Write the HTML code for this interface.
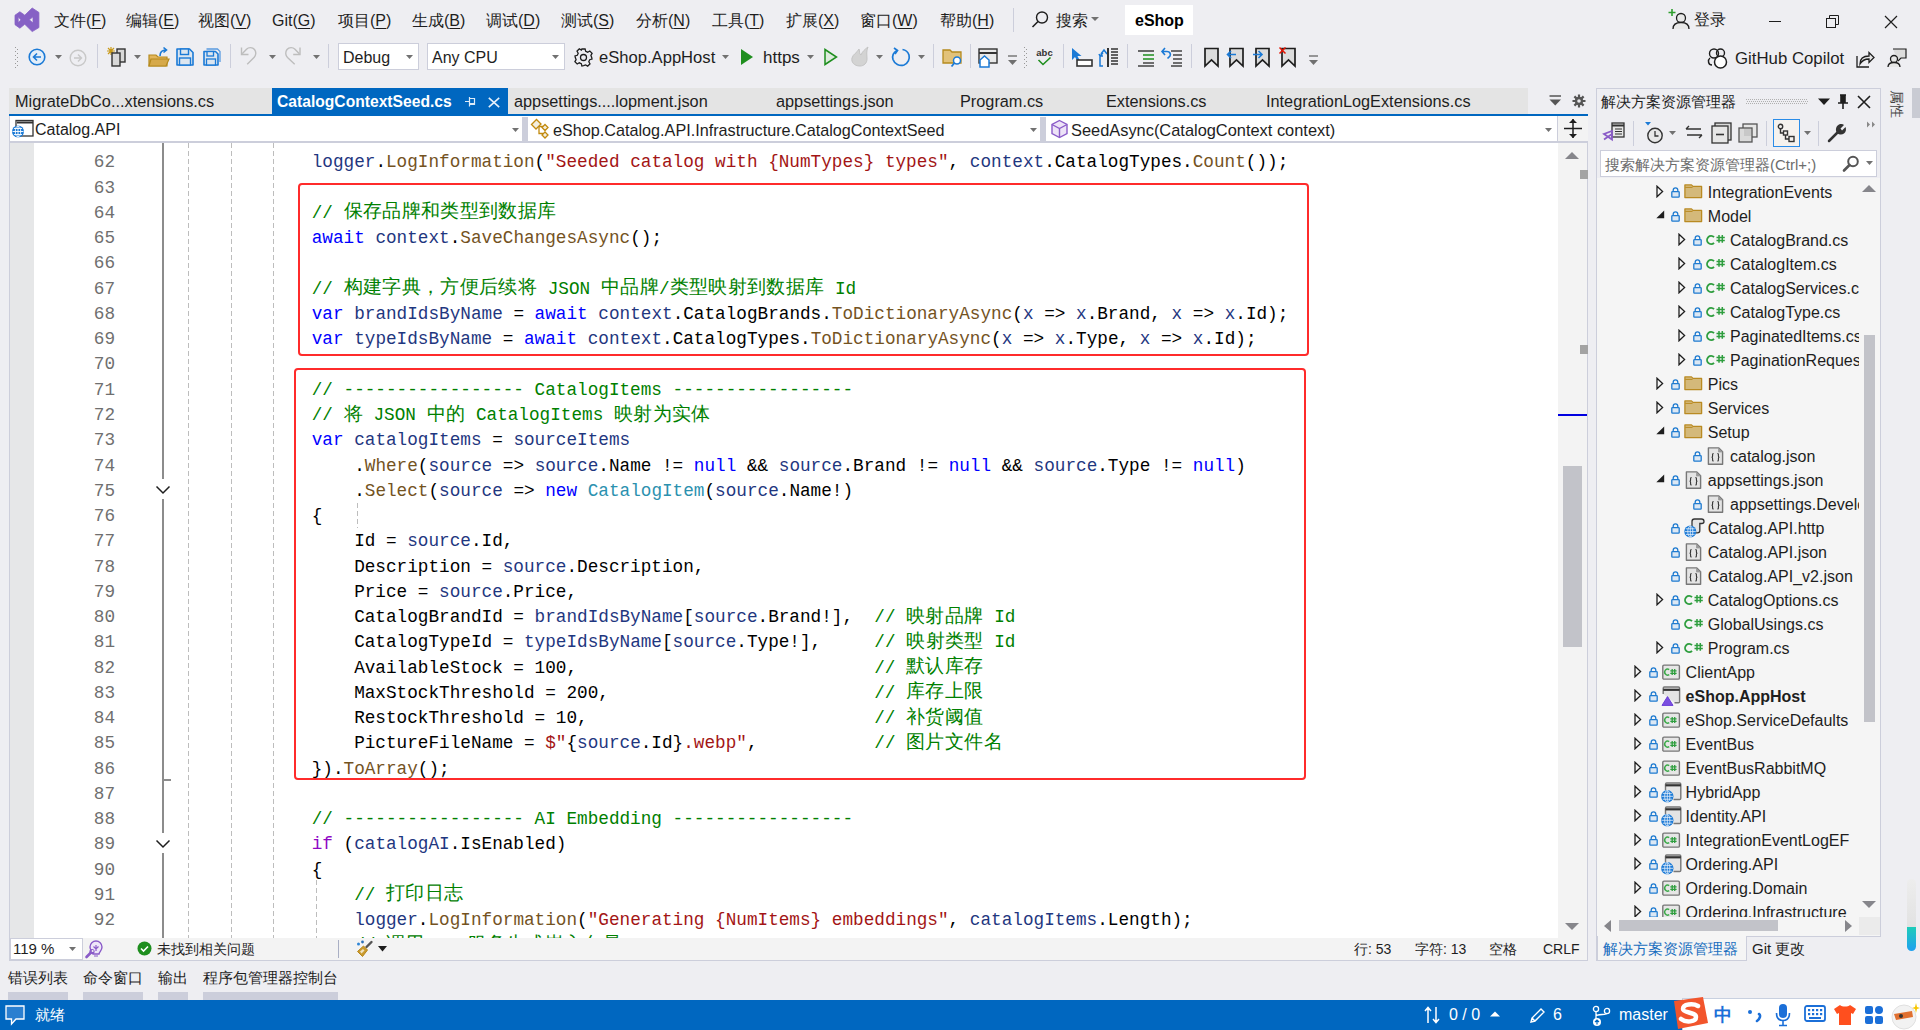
<!DOCTYPE html><html><head><meta charset="utf-8"><style>
*{margin:0;padding:0;box-sizing:border-box}
html,body{width:1920px;height:1030px;overflow:hidden;background:#EEEEF2;font-family:"Liberation Sans",sans-serif;position:relative}
.t{position:absolute;white-space:nowrap;line-height:24px;height:24px}
.code{position:absolute;white-space:pre;font-family:"Liberation Mono",monospace;font-size:17.7px;line-height:25px;height:25px}
.cj{font-weight:normal;font-family:"Liberation Sans",sans-serif;font-size:19px;display:inline-block;width:19.36px;text-align:left;position:relative;top:-0.5px;line-height:0}
.ln{position:absolute;font-family:"Liberation Mono",monospace;font-size:17.7px;color:#6F6F6F;text-align:right;width:80px;line-height:25px}
u{text-decoration:underline;text-underline-offset:2px}
</style></head><body>
<svg style="position:absolute;left:10px;top:4px;" width="36" height="32" viewBox="0 0 36 32" overflow="visible"><path fill-rule="evenodd" d="M5 11.2 L9.9 7.8 L14.75 11.2 L22.2 4 L28.9 8.4 V23.6 L22.2 27.6 L14.75 20.2 L9.9 24.2 L5 20.7 Z M8.2 13 V18.6 L11 15.8 Z M23 12.8 L19.3 15.8 L23 19 Z" fill="#8661C5" stroke="#8661C5" stroke-width="0.8" stroke-linejoin="round"/></svg>
<div class="t " style="left:54px;top:9px;font-size:16px;color:#1E1E1E;">文件(<u>F</u>)</div>
<div class="t " style="left:126px;top:9px;font-size:16px;color:#1E1E1E;">编辑(<u>E</u>)</div>
<div class="t " style="left:198px;top:9px;font-size:16px;color:#1E1E1E;">视图(<u>V</u>)</div>
<div class="t " style="left:272px;top:9px;font-size:16px;color:#1E1E1E;">Git(<u>G</u>)</div>
<div class="t " style="left:338px;top:9px;font-size:16px;color:#1E1E1E;">项目(<u>P</u>)</div>
<div class="t " style="left:412px;top:9px;font-size:16px;color:#1E1E1E;">生成(<u>B</u>)</div>
<div class="t " style="left:486px;top:9px;font-size:16px;color:#1E1E1E;">调试(<u>D</u>)</div>
<div class="t " style="left:561px;top:9px;font-size:16px;color:#1E1E1E;">测试(<u>S</u>)</div>
<div class="t " style="left:636px;top:9px;font-size:16px;color:#1E1E1E;">分析(<u>N</u>)</div>
<div class="t " style="left:712px;top:9px;font-size:16px;color:#1E1E1E;">工具(<u>T</u>)</div>
<div class="t " style="left:786px;top:9px;font-size:16px;color:#1E1E1E;">扩展(<u>X</u>)</div>
<div class="t " style="left:860px;top:9px;font-size:16px;color:#1E1E1E;">窗口(<u>W</u>)</div>
<div class="t " style="left:940px;top:9px;font-size:16px;color:#1E1E1E;">帮助(<u>H</u>)</div>
<div style="position:absolute;left:1013px;top:8px;width:1px;height:24px;background:#CCCEDB;"></div>
<svg style="position:absolute;left:1030px;top:10px;" width="20" height="20" viewBox="0 0 20 20" overflow="visible"><circle cx="12" cy="7.5" r="5.5" fill="none" stroke="#1E1E1E" stroke-width="1.4"/><path d="M8 11.5 L2.5 17" stroke="#1E1E1E" stroke-width="1.6"/></svg>
<div class="t " style="left:1056px;top:9px;font-size:16px;color:#1E1E1E;">搜索</div>
<svg style="position:absolute;left:1091px;top:17px;" width="9" height="6" viewBox="0 0 9 6" overflow="visible"><path d="M0 0 H8 L4 4Z" fill="#717171"/></svg>
<div style="position:absolute;left:1125px;top:5px;width:68px;height:30px;background:#FFFFFF;"></div>
<div class="t " style="left:1135px;top:9px;font-size:16px;color:#000;font-weight:bold">eShop</div>
<svg style="position:absolute;left:1668px;top:8px;" width="22" height="22" viewBox="0 0 22 22" overflow="visible"><path d="M4 1 V8 M0.5 4.5 H7.5" stroke="#2E9E2E" stroke-width="1.6"/><circle cx="13" cy="10" r="4.5" fill="#E8E8E8" stroke="#1E1E1E" stroke-width="1.3"/><path d="M5 21 C5 16 9 14.5 13 14.5 C17 14.5 21 16 21 21" fill="#E8E8E8" stroke="#1E1E1E" stroke-width="1.3"/></svg>
<div class="t " style="left:1694px;top:8px;font-size:16px;color:#1E1E1E;">登录</div>
<div style="position:absolute;left:1769px;top:21px;width:12px;height:1px;background:#1E1E1E;"></div>
<svg style="position:absolute;left:1826px;top:15px;" width="14" height="14" viewBox="0 0 14 14" overflow="visible"><rect x="0.5" y="3.5" width="9" height="9" fill="none" stroke="#1E1E1E"/><path d="M3.5 3.5 V0.5 H12.5 V9.5 H9.5" fill="none" stroke="#1E1E1E"/></svg>
<svg style="position:absolute;left:1884px;top:15px;" width="14" height="14" viewBox="0 0 14 14" overflow="visible"><path d="M1 1 L13 13 M13 1 L1 13" stroke="#1E1E1E" stroke-width="1.2"/></svg>
<svg style="position:absolute;left:15px;top:47px;" width="4" height="22" viewBox="0 0 4 22" overflow="visible"><rect x="0" y="0" width="1" height="1" fill="#999"/><rect x="2" y="2" width="1" height="1" fill="#999"/><rect x="0" y="4" width="1" height="1" fill="#999"/><rect x="2" y="6" width="1" height="1" fill="#999"/><rect x="0" y="8" width="1" height="1" fill="#999"/><rect x="2" y="10" width="1" height="1" fill="#999"/><rect x="0" y="12" width="1" height="1" fill="#999"/><rect x="2" y="14" width="1" height="1" fill="#999"/><rect x="0" y="16" width="1" height="1" fill="#999"/><rect x="2" y="18" width="1" height="1" fill="#999"/><rect x="0" y="20" width="1" height="1" fill="#999"/></svg>
<svg style="position:absolute;left:28px;top:48px;" width="18" height="18" viewBox="0 0 18 18" overflow="visible"><circle cx="9" cy="9" r="7.8" fill="#E3EEF9" stroke="#1B7AD6" stroke-width="1.6"/><path d="M13 9 H5.5 M9 5.5 L5.5 9 L9 12.5" fill="none" stroke="#1B7AD6" stroke-width="1.6"/></svg>
<svg style="position:absolute;left:55px;top:55px;" width="8" height="5" viewBox="0 0 8 5" overflow="visible"><path d="M0 0 H7 L3.5 4Z" fill="#717171"/></svg>
<svg style="position:absolute;left:69px;top:49px;" width="18" height="18" viewBox="0 0 18 18" overflow="visible"><circle cx="9" cy="9" r="7.8" fill="none" stroke="#C8C8C8" stroke-width="1.4"/><path d="M5 9 H12.5 M9 5.5 L12.5 9 L9 12.5" fill="none" stroke="#C8C8C8" stroke-width="1.4"/></svg>
<div style="position:absolute;left:97px;top:44px;width:1px;height:24px;background:#CCCEDB;"></div>
<svg style="position:absolute;left:106px;top:46px;" width="22" height="22" viewBox="0 0 22 22" overflow="visible"><g stroke="#C99A1A" stroke-width="1.2"><path d="M5 1 V9 M1 5 H9 M2 2 L8 8 M8 2 L2 8"/></g><rect x="11" y="3" width="8" height="13" fill="#D8D8D8" stroke="#333" stroke-width="1.4"/><rect x="6" y="7" width="8" height="13" fill="#D8D8D8" stroke="#333" stroke-width="1.4"/></svg>
<svg style="position:absolute;left:134px;top:55px;" width="8" height="5" viewBox="0 0 8 5" overflow="visible"><path d="M0 0 H7 L3.5 4Z" fill="#717171"/></svg>
<svg style="position:absolute;left:148px;top:46px;" width="22" height="22" viewBox="0 0 22 22" overflow="visible"><path d="M1 9 H8 L10 11 H19 V20 H1 Z" fill="#E2B55A" stroke="#B58A1E" stroke-width="1.2"/><path d="M3 13 H21 L18 20 H1 Z" fill="#D6A94A" stroke="#B58A1E" stroke-width="1.2"/><path d="M12 10 C12 6 14 4 18 4 M15.5 1.5 L18.5 4 L15.5 6.5" fill="none" stroke="#1B7AD6" stroke-width="1.6"/></svg>
<svg style="position:absolute;left:176px;top:48px;" width="18" height="18" viewBox="0 0 18 18" overflow="visible"><path d="M1 1 H13.5 L17 4.5 V17 H1 Z" fill="#DCE6F0" stroke="#1B7AD6" stroke-width="1.6" stroke-linejoin="round"/><rect x="4.5" y="1" width="8" height="5.5" fill="#DCE6F0" stroke="#1B7AD6" stroke-width="1.4"/><rect x="3.5" y="10" width="11" height="7" fill="#DCE6F0" stroke="#1B7AD6" stroke-width="1.4"/></svg>
<svg style="position:absolute;left:203px;top:48px;" width="18" height="18" viewBox="0 0 18 18" overflow="visible"><path d="M3.5 1 H14.5 L17 3.5 V14" fill="none" stroke="#5A9BE0" stroke-width="1.3"/><path d="M1 3.5 H12.5 L15 6 V17 H1 Z" fill="#DCE6F0" stroke="#1B7AD6" stroke-width="1.6" stroke-linejoin="round"/><rect x="4" y="3.5" width="6.5" height="4.5" fill="#DCE6F0" stroke="#1B7AD6" stroke-width="1.3"/><rect x="3.5" y="11" width="9" height="6" fill="#DCE6F0" stroke="#1B7AD6" stroke-width="1.3"/></svg>
<div style="position:absolute;left:230px;top:44px;width:1px;height:24px;background:#CCCEDB;"></div>
<svg style="position:absolute;left:240px;top:47px;" width="18" height="20" viewBox="0 0 18 20" overflow="visible"><path d="M1.5 0.5 V7.5 H8.5" fill="none" stroke="#BDBDBD" stroke-width="1.4"/><path d="M2.2 6.8 L6.5 2.2 C8.5 0.2 12.5 0 14.5 2.5 C16.5 5 16 8.5 14 10.5 L7.2 17.2" fill="none" stroke="#BDBDBD" stroke-width="1.4"/></svg>
<svg style="position:absolute;left:269px;top:55px;" width="8" height="5" viewBox="0 0 8 5" overflow="visible"><path d="M0 0 H7 L3.5 4Z" fill="#717171"/></svg>
<svg style="position:absolute;left:285px;top:47px;" width="18" height="20" viewBox="0 0 18 20" overflow="visible"><path d="M15 0.5 V7.5 H8.2" fill="none" stroke="#BDBDBD" stroke-width="1.4"/><path d="M14.3 6.8 L10 2.2 C8 0.2 4 0 2 2.5 C0 5 0.5 8.5 2.5 10.5 L9.7 17.2" fill="none" stroke="#BDBDBD" stroke-width="1.4"/></svg>
<svg style="position:absolute;left:313px;top:55px;" width="8" height="5" viewBox="0 0 8 5" overflow="visible"><path d="M0 0 H7 L3.5 4Z" fill="#717171"/></svg>
<div style="position:absolute;left:328px;top:44px;width:1px;height:24px;background:#CCCEDB;"></div>
<div style="position:absolute;left:338px;top:43px;width:81px;height:27px;background:#FFFFFF;border:1px solid #CCCEDB"></div>
<div class="t " style="left:343px;top:46px;font-size:16px;color:#1E1E1E;">Debug</div>
<svg style="position:absolute;left:406px;top:55px;" width="8" height="5" viewBox="0 0 8 5" overflow="visible"><path d="M0 0 H7 L3.5 4Z" fill="#717171"/></svg>
<div style="position:absolute;left:427px;top:43px;width:138px;height:27px;background:#FFFFFF;border:1px solid #CCCEDB"></div>
<div class="t " style="left:432px;top:46px;font-size:16px;color:#1E1E1E;">Any CPU</div>
<svg style="position:absolute;left:552px;top:55px;" width="8" height="5" viewBox="0 0 8 5" overflow="visible"><path d="M0 0 H7 L3.5 4Z" fill="#717171"/></svg>
<svg style="position:absolute;left:574px;top:48px;" width="19" height="19" viewBox="0 0 19 19" overflow="visible"><g transform="translate(9.5 9.5)"><path d="M-1.6 -8.5 H1.6 L2.2 -6.2 L4.2 -5.3 L6.3 -6.5 L8.6 -4.2 L7.4 -2.1 L8.2 -0.1 L8.5 1.6 V1.6 L6.2 2.2 L5.3 4.2 L6.5 6.3 L4.2 8.6 L2.1 7.4 L0.1 8.2 L-1.6 8.5 L-2.2 6.2 L-4.2 5.3 L-6.3 6.5 L-8.6 4.2 L-7.4 2.1 L-8.2 0.1 L-8.5 -1.6 L-6.2 -2.2 L-5.3 -4.2 L-6.5 -6.3 L-4.2 -8.6 L-2.1 -7.4 Z" fill="none" stroke="#1E1E1E" stroke-width="1.3"/><circle r="3" fill="none" stroke="#1E1E1E" stroke-width="1.3"/></g></svg>
<div class="t " style="left:599px;top:46px;font-size:16.6px;color:#1E1E1E;">eShop.AppHost</div>
<svg style="position:absolute;left:722px;top:55px;" width="8" height="5" viewBox="0 0 8 5" overflow="visible"><path d="M0 0 H7 L3.5 4Z" fill="#717171"/></svg>
<svg style="position:absolute;left:740px;top:48px;" width="14" height="18" viewBox="0 0 14 18" overflow="visible"><path d="M1 1 L13 9 L1 17 Z" fill="#1E8E1E"/></svg>
<div class="t " style="left:763px;top:46px;font-size:17px;color:#1E1E1E;">https</div>
<svg style="position:absolute;left:807px;top:55px;" width="8" height="5" viewBox="0 0 8 5" overflow="visible"><path d="M0 0 H7 L3.5 4Z" fill="#717171"/></svg>
<svg style="position:absolute;left:824px;top:48px;" width="14" height="18" viewBox="0 0 14 18" overflow="visible"><path d="M1 1.5 L12.5 9 L1 16.5 Z" fill="#DDEBDD" stroke="#1E8E1E" stroke-width="1.5"/></svg>
<svg style="position:absolute;left:850px;top:46px;" width="19" height="21" viewBox="0 0 19 21" overflow="visible"><path d="M10 20 C4 20 1 16 2 12 C3 8 7 7 9 3 C10 6 9 8 11 9 C12 6 15 3 18 1 C16 5 17 9 17 13 C17 17 14 20 10 20Z" fill="#D3D3D3" stroke="#C4C4C4"/></svg>
<svg style="position:absolute;left:876px;top:55px;" width="8" height="5" viewBox="0 0 8 5" overflow="visible"><path d="M0 0 H7 L3.5 4Z" fill="#717171"/></svg>
<svg style="position:absolute;left:891px;top:47px;" width="20" height="20" viewBox="0 0 20 20" overflow="visible"><path d="M6 3.5 C2.5 5.5 1 9 2 12.5 C3.5 17 8.5 19.5 13 18 C17 16.5 19 12 18 8 C17 5 14.5 3 11.5 2.5" fill="none" stroke="#1B7AD6" stroke-width="1.7"/><path d="M3 1 L6.5 3.5 L4 7" fill="none" stroke="#1B7AD6" stroke-width="1.7"/></svg>
<svg style="position:absolute;left:918px;top:55px;" width="8" height="5" viewBox="0 0 8 5" overflow="visible"><path d="M0 0 H7 L3.5 4Z" fill="#717171"/></svg>
<div style="position:absolute;left:933px;top:44px;width:1px;height:24px;background:#CCCEDB;"></div>
<svg style="position:absolute;left:942px;top:47px;" width="22" height="21" viewBox="0 0 22 21" overflow="visible"><path d="M1 3 H8 L10 5 H19 V16 H1 Z" fill="#E2C27A" stroke="#B58A1E" stroke-width="1.3"/><circle cx="15" cy="13.5" r="3.5" fill="#fff" stroke="#1B7AD6" stroke-width="1.5"/><path d="M12.5 16 L9.5 19.5" stroke="#1B7AD6" stroke-width="1.8"/></svg>
<div style="position:absolute;left:970px;top:44px;width:1px;height:24px;background:#CCCEDB;"></div>
<svg style="position:absolute;left:978px;top:48px;" width="21" height="20" viewBox="0 0 21 20" overflow="visible"><rect x="1" y="1" width="18" height="14" fill="#E8E8E8" stroke="#333" stroke-width="1.4"/><path d="M1 5 H19" stroke="#333" stroke-width="2"/><path d="M2 12 L6.5 8 L11 12 V19 H2 Z" fill="#fff" stroke="#1B7AD6" stroke-width="1.5"/></svg>
<svg style="position:absolute;left:1008px;top:55px;" width="10" height="12" viewBox="0 0 10 12" overflow="visible"><path d="M0 1 H9" stroke="#707070" stroke-width="1.4"/><path d="M0 5 H9 L4.5 10Z" fill="#707070"/></svg>
<svg style="position:absolute;left:1024px;top:47px;" width="3" height="22" viewBox="0 0 3 22" overflow="visible"><rect x="0" y="0" width="1" height="1" fill="#999"/><rect x="2" y="2" width="1" height="1" fill="#999"/><rect x="0" y="4" width="1" height="1" fill="#999"/><rect x="2" y="6" width="1" height="1" fill="#999"/><rect x="0" y="8" width="1" height="1" fill="#999"/><rect x="2" y="10" width="1" height="1" fill="#999"/><rect x="0" y="12" width="1" height="1" fill="#999"/><rect x="2" y="14" width="1" height="1" fill="#999"/><rect x="0" y="16" width="1" height="1" fill="#999"/><rect x="2" y="18" width="1" height="1" fill="#999"/><rect x="0" y="20" width="1" height="1" fill="#999"/></svg>
<svg style="position:absolute;left:1035px;top:47px;" width="19" height="20" viewBox="0 0 19 20" overflow="visible"><text x="9.5" y="9" font-family="Liberation Sans" font-size="9.5" font-weight="bold" text-anchor="middle" fill="#333">abc</text><path d="M3.5 13 L8 17.5 L15.5 10.5" fill="none" stroke="#1E8E1E" stroke-width="1.6"/></svg>
<div style="position:absolute;left:1063px;top:44px;width:1px;height:24px;background:#CCCEDB;"></div>
<svg style="position:absolute;left:1071px;top:47px;" width="22" height="21" viewBox="0 0 22 21" overflow="visible"><path d="M1 1 V13 L4 10 L7 15 L9 14 L6.5 9 H10.5 Z" fill="#1B7AD6"/><rect x="6" y="13" width="15" height="6" fill="#fff" stroke="#333" stroke-width="1.6"/></svg>
<svg style="position:absolute;left:1099px;top:47px;" width="21" height="21" viewBox="0 0 21 21" overflow="visible"><path d="M4 19 H1 V9 H4 M1 9 L4 6 M1 9 L0 7" fill="none" stroke="#1B7AD6" stroke-width="1.5"/><path d="M2 7 L5 3 L8 7" fill="none" stroke="#1B7AD6" stroke-width="1.5"/><path d="M9 1 V20" stroke="#333" stroke-width="2"/><g stroke="#333" stroke-width="1.5"><path d="M12 2 H19 M12 5 H19 M12 8 H19 M12 11 H19 M12 14 H19 M12 17 H19"/></g></svg>
<div style="position:absolute;left:1127px;top:44px;width:1px;height:24px;background:#CCCEDB;"></div>
<svg style="position:absolute;left:1137px;top:49px;" width="19" height="18" viewBox="0 0 19 18" overflow="visible"><g stroke-width="1.6"><path d="M1 2 H17" stroke="#444"/><path d="M6 6 H17 M6 10 H17" stroke="#1E8E1E"/><path d="M6 14 H17 M1 17 H17" stroke="#444"/></g></svg>
<svg style="position:absolute;left:1161px;top:47px;" width="22" height="20" viewBox="0 0 22 20" overflow="visible"><path d="M4 1 L1 4.5 L4 8 M1.5 4.5 H6 C9 4.5 10 7 9 9 L6.5 11.5" fill="none" stroke="#1B7AD6" stroke-width="1.6"/><g stroke="#444" stroke-width="1.5"><path d="M10 4 H21 M12 8 H21 M12 12 H21 M12 16 H21 M10 19 H21"/></g></svg>
<div style="position:absolute;left:1191px;top:44px;width:1px;height:24px;background:#CCCEDB;"></div>
<svg style="position:absolute;left:1202px;top:47px;" width="20" height="21" viewBox="0 0 20 21" overflow="visible"><path d="M3 1.5 H16 V19 L9.5 13 L3 19 Z" fill="#DCDCDC" stroke="#1E1E1E" stroke-width="1.7"/></svg>
<svg style="position:absolute;left:1227px;top:47px;" width="20" height="21" viewBox="0 0 20 21" overflow="visible"><path d="M3 1.5 H16 V19 L9.5 13 L3 19 Z" fill="#DCDCDC" stroke="#1E1E1E" stroke-width="1.7"/><path d="M9 7.5 H0.5 M4 4 L0.5 7.5 L4 11" fill="none" stroke="#1B7AD6" stroke-width="1.6"/></svg>
<svg style="position:absolute;left:1253px;top:47px;" width="20" height="21" viewBox="0 0 20 21" overflow="visible"><path d="M3 1.5 H16 V19 L9.5 13 L3 19 Z" fill="#DCDCDC" stroke="#1E1E1E" stroke-width="1.7"/><path d="M0 7.5 H9 M5.5 4 L9 7.5 L5.5 11" fill="none" stroke="#1B7AD6" stroke-width="1.6"/></svg>
<svg style="position:absolute;left:1279px;top:47px;" width="20" height="21" viewBox="0 0 20 21" overflow="visible"><path d="M3 1.5 H16 V19 L9.5 13 L3 19 Z" fill="#DCDCDC" stroke="#1E1E1E" stroke-width="1.7"/><path d="M0.5 0.5 L6.5 6.5 M6.5 0.5 L0.5 6.5" stroke="#E51400" stroke-width="1.5"/></svg>
<svg style="position:absolute;left:1309px;top:55px;" width="10" height="12" viewBox="0 0 10 12" overflow="visible"><path d="M0 1 H9" stroke="#707070" stroke-width="1.4"/><path d="M0 5 H9 L4.5 10Z" fill="#707070"/></svg>
<svg style="position:absolute;left:1707px;top:47px;" width="23" height="22" viewBox="0 0 23 22" overflow="visible"><circle cx="7" cy="6.5" r="4.5" fill="none" stroke="#1E1E1E" stroke-width="1.4"/><circle cx="13.5" cy="6" r="4" fill="none" stroke="#1E1E1E" stroke-width="1.4"/><path d="M3 11 C0.5 13 1 18 5 18" fill="none" stroke="#1E1E1E" stroke-width="1.4"/><circle cx="13.5" cy="15" r="6" fill="#fff" stroke="#1E1E1E" stroke-width="1.5"/></svg>
<div class="t " style="left:1735px;top:46.5px;font-size:16.8px;color:#1E1E1E;">GitHub Copilot</div>
<svg style="position:absolute;left:1856px;top:49px;" width="19" height="19" viewBox="0 0 19 19" overflow="visible"><path d="M1 7 V18 H13" fill="none" stroke="#1E1E1E" stroke-width="1.3"/><path d="M4 15 C4 9 8 7 13 7 V3.5 L18 8.5 L13 13.5 V10 C9 10 6 11.5 4 15Z" fill="#E6E6E6" stroke="#1E1E1E" stroke-width="1.3"/></svg>
<svg style="position:absolute;left:1887px;top:48px;" width="20" height="20" viewBox="0 0 20 20" overflow="visible"><path d="M6 1 H19 V10 H14 L11 13" fill="#DCDCDC" stroke="#1E1E1E" stroke-width="1.2"/><circle cx="7" cy="11" r="3.5" fill="#E6E6E6" stroke="#1E1E1E" stroke-width="1.3"/><path d="M1 19 C1 16 3.5 14.5 7 14.5 C10.5 14.5 13 16 13 19" fill="#E6E6E6" stroke="#1E1E1E" stroke-width="1.3"/></svg>
<div style="position:absolute;left:9px;top:88px;width:1519px;height:26px;background:#E4E4E4;"></div>
<div style="position:absolute;left:272px;top:88px;width:236px;height:26px;background:#0067C0;"></div>
<div class="t " style="left:15px;top:89px;font-size:16.3px;color:#1E1E1E;">MigrateDbCo...xtensions.cs</div>
<div class="t " style="left:514px;top:89px;font-size:16.3px;color:#1E1E1E;">appsettings....lopment.json</div>
<div class="t " style="left:776px;top:89px;font-size:16.3px;color:#1E1E1E;">appsettings.json</div>
<div class="t " style="left:960px;top:89px;font-size:16.3px;color:#1E1E1E;">Program.cs</div>
<div class="t " style="left:1106px;top:89px;font-size:16.3px;color:#1E1E1E;">Extensions.cs</div>
<div class="t " style="left:1266px;top:89px;font-size:16.3px;color:#1E1E1E;">IntegrationLogExtensions.cs</div>
<div class="t " style="left:277px;top:89.5px;font-size:15.65px;color:#FFFFFF;font-weight:bold">CatalogContextSeed.cs</div>
<svg style="position:absolute;left:464px;top:96px;" width="12" height="12" viewBox="0 0 12 12" overflow="visible"><path d="M1 5.5 H5.5 M5.5 1 V10.5 M5.5 2.5 H10.5 V8.5 H5.5 M5.5 7.5 H10.5" fill="none" stroke="#DDEBF8" stroke-width="1.2"/></svg>
<svg style="position:absolute;left:488px;top:96.5px;" width="12" height="11" viewBox="0 0 12 11" overflow="visible"><path d="M0.8 0.8 L11.2 10.2 M11.2 0.8 L0.8 10.2" stroke="#E6F0FA" stroke-width="1.6"/></svg>
<svg style="position:absolute;left:1549px;top:95px;" width="13" height="12" viewBox="0 0 13 12" overflow="visible"><path d="M0.5 1 H12" stroke="#555" stroke-width="1.5"/><path d="M0.5 4.5 H12 L6.25 10.5Z" fill="#555"/></svg>
<svg style="position:absolute;left:1572px;top:94px;" width="14" height="14" viewBox="0 0 14 14" overflow="visible"><g transform="translate(7 7)" fill="#555"><circle r="4.2"/><g stroke="#555" stroke-width="2.2"><path d="M0 -6.5 V6.5 M-6.5 0 H6.5 M-4.6 -4.6 L4.6 4.6 M4.6 -4.6 L-4.6 4.6"/></g><circle r="1.8" fill="#E9E9EC"/></g></svg>
<div style="position:absolute;left:9px;top:114px;width:1579px;height:2px;background:#0067C0;"></div>
<div style="position:absolute;left:9px;top:116px;width:1579px;height:27px;background:#FFFFFF;border-left:1px solid #CCCEDB;border-bottom:2px solid #CCCEDB"></div>
<div style="position:absolute;left:522px;top:117px;width:6px;height:24px;background:#CCCEDB;"></div>
<div style="position:absolute;left:1040px;top:117px;width:6px;height:24px;background:#CCCEDB;"></div>
<div style="position:absolute;left:1557px;top:116px;width:31px;height:25px;background:#F3F3F3;border-left:1px solid #CCCEDB"></div>
<svg style="position:absolute;left:11px;top:119px;" width="24" height="20" viewBox="0 0 24 20" overflow="visible"><rect x="5" y="1.5" width="17" height="15.5" fill="#fff" stroke="#333" stroke-width="1.3"/><path d="M6 3.5 H22" stroke="#333" stroke-width="2"/><circle cx="7" cy="12.5" r="6" fill="#1B7AD6"/><path d="M1.5 12.5 H12.5 M7 7 V18 M3 9.5 H11 M3 15.5 H11" stroke="#fff" stroke-width="0.9"/><ellipse cx="7" cy="12.5" rx="2.7" ry="5.5" fill="none" stroke="#fff" stroke-width="0.9"/></svg>
<div class="t " style="left:35px;top:117.5px;font-size:16px;color:#1E1E1E;">Catalog.API</div>
<svg style="position:absolute;left:511.5px;top:128px;" width="8" height="5" viewBox="0 0 8 5" overflow="visible"><path d="M0 0 H7 L3.5 4Z" fill="#717171"/></svg>
<svg style="position:absolute;left:530px;top:118px;" width="23" height="22" viewBox="0 0 23 22" overflow="visible"><path d="M1.5 6.5 L6.5 1.5 L11 6 L6 11 Z" fill="#F3EEDD" stroke="#C28A0E" stroke-width="1.3"/><path d="M12 9.5 L15 6.5 L18 9.5 L15 12.5 Z M12 17 L15 14 L18 17 L15 20 Z" fill="#F3EEDD" stroke="#C28A0E" stroke-width="1.3"/><path d="M9 8.5 V15.5 H13 M9 8.5 H13" fill="none" stroke="#C28A0E" stroke-width="1.3"/></svg>
<div class="t " style="left:553px;top:117.5px;font-size:16.2px;color:#1E1E1E;">eShop.Catalog.API.Infrastructure.CatalogContextSeed</div>
<svg style="position:absolute;left:1029.5px;top:128px;" width="8" height="5" viewBox="0 0 8 5" overflow="visible"><path d="M0 0 H7 L3.5 4Z" fill="#717171"/></svg>
<svg style="position:absolute;left:1050px;top:119px;" width="19" height="20" viewBox="0 0 19 20" overflow="visible"><path d="M9.5 1.5 L17 5.5 V14.5 L9.5 18.5 L2 14.5 V5.5 Z" fill="#EDE3F7" stroke="#8A5BC8" stroke-width="1.4"/><path d="M2 5.5 L9.5 9.5 L17 5.5 M9.5 9.5 V18.5" fill="none" stroke="#8A5BC8" stroke-width="1.4"/></svg>
<div class="t " style="left:1071px;top:117.5px;font-size:16.4px;color:#1E1E1E;">SeedAsync(CatalogContext context)</div>
<svg style="position:absolute;left:1545px;top:128px;" width="8" height="5" viewBox="0 0 8 5" overflow="visible"><path d="M0 0 H7 L3.5 4Z" fill="#717171"/></svg>
<svg style="position:absolute;left:1563px;top:118px;" width="20" height="22" viewBox="0 0 20 22" overflow="visible"><path d="M1 10.5 H19" stroke="#1E1E1E" stroke-width="1.5"/><path d="M10 1 V20" stroke="#1E1E1E" stroke-width="1.5"/><path d="M6 5 L10 1 L14 5 Z M6 16 L10 20 L14 16 Z" fill="#1E1E1E"/></svg>
<div style="position:absolute;left:9px;top:143px;width:1549px;height:795px;background:#FFFFFF;border-left:1px solid #CCCEDB"></div>
<div style="position:absolute;left:10px;top:143px;width:24px;height:795px;background:#E6E7E8;"></div>
<div style="position:absolute;left:162px;top:143px;width:2px;height:795px;background:#8C8C8C"></div>
<div style="position:absolute;left:160px;top:479.28px;width:6px;height:20px;background:#FFFFFF;"></div>
<svg style="position:absolute;left:155px;top:485.28px;" width="16" height="10" viewBox="0 0 16 10" overflow="visible"><path d="M1.5 1.5 L8 8 L14.5 1.5" fill="none" stroke="#1E1E1E" stroke-width="1.5"/></svg>
<div style="position:absolute;left:160px;top:832.9200000000001px;width:6px;height:20px;background:#FFFFFF;"></div>
<svg style="position:absolute;left:155px;top:838.9200000000001px;" width="16" height="10" viewBox="0 0 16 10" overflow="visible"><path d="M1.5 1.5 L8 8 L14.5 1.5" fill="none" stroke="#1E1E1E" stroke-width="1.5"/></svg>
<div style="position:absolute;left:163px;top:779px;width:8px;height:1.5px;background:#8C8C8C;"></div>
<div style="position:absolute;left:188px;top:143px;width:1px;height:795px;background:repeating-linear-gradient(to bottom,#BDBDBD 0,#BDBDBD 5px,transparent 5px,transparent 8px)"></div>
<div style="position:absolute;left:231px;top:143px;width:1px;height:795px;background:repeating-linear-gradient(to bottom,#BDBDBD 0,#BDBDBD 5px,transparent 5px,transparent 8px)"></div>
<div style="position:absolute;left:273px;top:143px;width:1px;height:795px;background:repeating-linear-gradient(to bottom,#BDBDBD 0,#BDBDBD 5px,transparent 5px,transparent 8px)"></div>
<div style="position:absolute;left:316px;top:880px;width:1px;height:58px;background:repeating-linear-gradient(to bottom,#BDBDBD 0,#BDBDBD 5px,transparent 5px,transparent 8px)"></div>
<div style="position:absolute;left:357px;top:503px;width:1px;height:25px;background:repeating-linear-gradient(to bottom,#BDBDBD 0,#BDBDBD 5px,transparent 5px,transparent 8px)"></div>
<div class="ln" style="left:35px;top:150.40px">62</div>
<div class="code" style="left:311.7px;top:150.40px"><span style="color:#1F377F">logger</span><span style="color:#000000">.</span><span style="color:#74531F">LogInformation</span><span style="color:#000000">(</span><span style="color:#A31515">&quot;Seeded catalog with {NumTypes} types&quot;</span><span style="color:#000000">, </span><span style="color:#1F377F">context</span><span style="color:#000000">.CatalogTypes.</span><span style="color:#74531F">Count</span><span style="color:#000000">());</span></div>
<div class="ln" style="left:35px;top:175.66px">63</div>
<div class="ln" style="left:35px;top:200.92px">64</div>
<div class="code" style="left:311.7px;top:200.92px"><span style="color:#008000">// <b class="cj">保</b><b class="cj">存</b><b class="cj">品</b><b class="cj">牌</b><b class="cj">和</b><b class="cj">类</b><b class="cj">型</b><b class="cj">到</b><b class="cj">数</b><b class="cj">据</b><b class="cj">库</b></span></div>
<div class="ln" style="left:35px;top:226.18px">65</div>
<div class="code" style="left:311.7px;top:226.18px"><span style="color:#0000FF">await</span><span style="color:#000000"> </span><span style="color:#1F377F">context</span><span style="color:#000000">.</span><span style="color:#74531F">SaveChangesAsync</span><span style="color:#000000">();</span></div>
<div class="ln" style="left:35px;top:251.44px">66</div>
<div class="ln" style="left:35px;top:276.70px">67</div>
<div class="code" style="left:311.7px;top:276.70px"><span style="color:#008000">// <b class="cj">构</b><b class="cj">建</b><b class="cj">字</b><b class="cj">典</b><b class="cj">，</b><b class="cj">方</b><b class="cj">便</b><b class="cj">后</b><b class="cj">续</b><b class="cj">将</b> JSON <b class="cj">中</b><b class="cj">品</b><b class="cj">牌</b>/<b class="cj">类</b><b class="cj">型</b><b class="cj">映</b><b class="cj">射</b><b class="cj">到</b><b class="cj">数</b><b class="cj">据</b><b class="cj">库</b> Id</span></div>
<div class="ln" style="left:35px;top:301.96px">68</div>
<div class="code" style="left:311.7px;top:301.96px"><span style="color:#0000FF">var</span><span style="color:#000000"> </span><span style="color:#1F377F">brandIdsByName</span><span style="color:#000000"> = </span><span style="color:#0000FF">await</span><span style="color:#000000"> </span><span style="color:#1F377F">context</span><span style="color:#000000">.CatalogBrands.</span><span style="color:#74531F">ToDictionaryAsync</span><span style="color:#000000">(</span><span style="color:#1F377F">x</span><span style="color:#000000"> =&gt; </span><span style="color:#1F377F">x</span><span style="color:#000000">.Brand, </span><span style="color:#1F377F">x</span><span style="color:#000000"> =&gt; </span><span style="color:#1F377F">x</span><span style="color:#000000">.Id);</span></div>
<div class="ln" style="left:35px;top:327.22px">69</div>
<div class="code" style="left:311.7px;top:327.22px"><span style="color:#0000FF">var</span><span style="color:#000000"> </span><span style="color:#1F377F">typeIdsByName</span><span style="color:#000000"> = </span><span style="color:#0000FF">await</span><span style="color:#000000"> </span><span style="color:#1F377F">context</span><span style="color:#000000">.CatalogTypes.</span><span style="color:#74531F">ToDictionaryAsync</span><span style="color:#000000">(</span><span style="color:#1F377F">x</span><span style="color:#000000"> =&gt; </span><span style="color:#1F377F">x</span><span style="color:#000000">.Type, </span><span style="color:#1F377F">x</span><span style="color:#000000"> =&gt; </span><span style="color:#1F377F">x</span><span style="color:#000000">.Id);</span></div>
<div class="ln" style="left:35px;top:352.48px">70</div>
<div class="ln" style="left:35px;top:377.74px">71</div>
<div class="code" style="left:311.7px;top:377.74px"><span style="color:#008000">// ----------------- CatalogItems -----------------</span></div>
<div class="ln" style="left:35px;top:403.00px">72</div>
<div class="code" style="left:311.7px;top:403.00px"><span style="color:#008000">// <b class="cj">将</b> JSON <b class="cj">中</b><b class="cj">的</b> CatalogItems <b class="cj">映</b><b class="cj">射</b><b class="cj">为</b><b class="cj">实</b><b class="cj">体</b></span></div>
<div class="ln" style="left:35px;top:428.26px">73</div>
<div class="code" style="left:311.7px;top:428.26px"><span style="color:#0000FF">var</span><span style="color:#000000"> </span><span style="color:#1F377F">catalogItems</span><span style="color:#000000"> = </span><span style="color:#1F377F">sourceItems</span></div>
<div class="ln" style="left:35px;top:453.52px">74</div>
<div class="code" style="left:311.7px;top:453.52px"><span style="color:#000000">    .</span><span style="color:#74531F">Where</span><span style="color:#000000">(</span><span style="color:#1F377F">source</span><span style="color:#000000"> =&gt; </span><span style="color:#1F377F">source</span><span style="color:#000000">.Name != </span><span style="color:#0000FF">null</span><span style="color:#000000"> &amp;&amp; </span><span style="color:#1F377F">source</span><span style="color:#000000">.Brand != </span><span style="color:#0000FF">null</span><span style="color:#000000"> &amp;&amp; </span><span style="color:#1F377F">source</span><span style="color:#000000">.Type != </span><span style="color:#0000FF">null</span><span style="color:#000000">)</span></div>
<div class="ln" style="left:35px;top:478.78px">75</div>
<div class="code" style="left:311.7px;top:478.78px"><span style="color:#000000">    .</span><span style="color:#74531F">Select</span><span style="color:#000000">(</span><span style="color:#1F377F">source</span><span style="color:#000000"> =&gt; </span><span style="color:#0000FF">new</span><span style="color:#000000"> </span><span style="color:#2B91AF">CatalogItem</span><span style="color:#000000">(</span><span style="color:#1F377F">source</span><span style="color:#000000">.Name!)</span></div>
<div class="ln" style="left:35px;top:504.04px">76</div>
<div class="code" style="left:311.7px;top:504.04px"><span style="color:#000000">{</span></div>
<div class="ln" style="left:35px;top:529.30px">77</div>
<div class="code" style="left:311.7px;top:529.30px"><span style="color:#000000">    Id = </span><span style="color:#1F377F">source</span><span style="color:#000000">.Id,</span></div>
<div class="ln" style="left:35px;top:554.56px">78</div>
<div class="code" style="left:311.7px;top:554.56px"><span style="color:#000000">    Description = </span><span style="color:#1F377F">source</span><span style="color:#000000">.Description,</span></div>
<div class="ln" style="left:35px;top:579.82px">79</div>
<div class="code" style="left:311.7px;top:579.82px"><span style="color:#000000">    Price = </span><span style="color:#1F377F">source</span><span style="color:#000000">.Price,</span></div>
<div class="ln" style="left:35px;top:605.08px">80</div>
<div class="code" style="left:311.7px;top:605.08px"><span style="color:#000000">    CatalogBrandId = </span><span style="color:#1F377F">brandIdsByName</span><span style="color:#000000">[</span><span style="color:#1F377F">source</span><span style="color:#000000">.Brand!],  </span><span style="color:#008000">// <b class="cj">映</b><b class="cj">射</b><b class="cj">品</b><b class="cj">牌</b> Id</span></div>
<div class="ln" style="left:35px;top:630.34px">81</div>
<div class="code" style="left:311.7px;top:630.34px"><span style="color:#000000">    CatalogTypeId = </span><span style="color:#1F377F">typeIdsByName</span><span style="color:#000000">[</span><span style="color:#1F377F">source</span><span style="color:#000000">.Type!],    </span><span style="color:#008000"> // <b class="cj">映</b><b class="cj">射</b><b class="cj">类</b><b class="cj">型</b> Id</span></div>
<div class="ln" style="left:35px;top:655.60px">82</div>
<div class="code" style="left:311.7px;top:655.60px"><span style="color:#000000">    AvailableStock = 100,                            </span><span style="color:#008000">// <b class="cj">默</b><b class="cj">认</b><b class="cj">库</b><b class="cj">存</b></span></div>
<div class="ln" style="left:35px;top:680.86px">83</div>
<div class="code" style="left:311.7px;top:680.86px"><span style="color:#000000">    MaxStockThreshold = 200,                         </span><span style="color:#008000">// <b class="cj">库</b><b class="cj">存</b><b class="cj">上</b><b class="cj">限</b></span></div>
<div class="ln" style="left:35px;top:706.12px">84</div>
<div class="code" style="left:311.7px;top:706.12px"><span style="color:#000000">    RestockThreshold = 10,                           </span><span style="color:#008000">// <b class="cj">补</b><b class="cj">货</b><b class="cj">阈</b><b class="cj">值</b></span></div>
<div class="ln" style="left:35px;top:731.38px">85</div>
<div class="code" style="left:311.7px;top:731.38px"><span style="color:#000000">    PictureFileName = </span><span style="color:#A31515">$&quot;</span><span style="color:#000000">{</span><span style="color:#1F377F">source</span><span style="color:#000000">.Id}</span><span style="color:#A31515">.webp&quot;</span><span style="color:#000000">,           </span><span style="color:#008000">// <b class="cj">图</b><b class="cj">片</b><b class="cj">文</b><b class="cj">件</b><b class="cj">名</b></span></div>
<div class="ln" style="left:35px;top:756.64px">86</div>
<div class="code" style="left:311.7px;top:756.64px"><span style="color:#000000">}).</span><span style="color:#74531F">ToArray</span><span style="color:#000000">();</span></div>
<div class="ln" style="left:35px;top:781.90px">87</div>
<div class="ln" style="left:35px;top:807.16px">88</div>
<div class="code" style="left:311.7px;top:807.16px"><span style="color:#008000">// ----------------- AI Embedding -----------------</span></div>
<div class="ln" style="left:35px;top:832.42px">89</div>
<div class="code" style="left:311.7px;top:832.42px"><span style="color:#8F08C4">if</span><span style="color:#000000"> (</span><span style="color:#1F377F">catalogAI</span><span style="color:#000000">.IsEnabled)</span></div>
<div class="ln" style="left:35px;top:857.68px">90</div>
<div class="code" style="left:311.7px;top:857.68px"><span style="color:#000000">{</span></div>
<div class="ln" style="left:35px;top:882.94px">91</div>
<div class="code" style="left:311.7px;top:882.94px"><span style="color:#008000">    // <b class="cj">打</b><b class="cj">印</b><b class="cj">日</b><b class="cj">志</b></span></div>
<div class="ln" style="left:35px;top:908.20px">92</div>
<div class="code" style="left:311.7px;top:908.20px"><span style="color:#000000">    </span><span style="color:#1F377F">logger</span><span style="color:#000000">.</span><span style="color:#74531F">LogInformation</span><span style="color:#000000">(</span><span style="color:#A31515">&quot;Generating {NumItems} embeddings&quot;</span><span style="color:#000000">, </span><span style="color:#1F377F">catalogItems</span><span style="color:#000000">.Length);</span></div>
<div class="ln" style="left:35px;top:933.46px">93</div>
<div class="code" style="left:311.7px;top:933.46px"><span style="color:#008000">    // <b class="cj">调</b><b class="cj">用</b> AI <b class="cj">服</b><b class="cj">务</b><b class="cj">生</b><b class="cj">成</b><b class="cj">嵌</b><b class="cj">入</b><b class="cj">向</b><b class="cj">量</b></span></div>
<div style="position:absolute;left:297.5px;top:183px;width:1011.5px;height:173px;background:transparent;border:2.6px solid #FF2B2B;border-radius:4px"></div>
<div style="position:absolute;left:294px;top:367.5px;width:1012px;height:412px;background:transparent;border:2.6px solid #FF2B2B;border-radius:4px"></div>
<div style="position:absolute;left:1558px;top:143px;width:30px;height:795px;background:#F3F3F3;border-right:1px solid #CCCEDB"></div>
<svg style="position:absolute;left:1565px;top:151px;" width="14" height="9" viewBox="0 0 14 9" overflow="visible"><path d="M0 8 L7 1 L14 8Z" fill="#86868B"/></svg>
<div style="position:absolute;left:1580px;top:170px;width:8px;height:9px;background:#A3A3A3;"></div>
<div style="position:absolute;left:1580px;top:345px;width:8px;height:9px;background:#A3A3A3;"></div>
<div style="position:absolute;left:1558px;top:414px;width:29px;height:2px;background:#0000E0;"></div>
<div style="position:absolute;left:1563px;top:466px;width:19px;height:181px;background:#C2C3C9;"></div>
<svg style="position:absolute;left:1565px;top:922px;" width="14" height="9" viewBox="0 0 14 9" overflow="visible"><path d="M0 1 L7 8 L14 1Z" fill="#86868B"/></svg>
<div style="position:absolute;left:9px;top:938px;width:1579px;height:23px;background:#F3F3F3;border-bottom:1px solid #CCCEDB;border-left:1px solid #CCCEDB;border-right:1px solid #CCCEDB"></div>
<div style="position:absolute;left:10px;top:938px;width:73px;height:22px;background:#FFFFFF;border:1px solid #CCCEDB"></div>
<div class="t " style="left:13px;top:937px;font-size:15px;color:#1E1E1E;">119 %</div>
<svg style="position:absolute;left:69px;top:947px;" width="8" height="5" viewBox="0 0 8 5" overflow="visible"><path d="M0 0 H7 L3.5 4Z" fill="#717171"/></svg>
<svg style="position:absolute;left:85px;top:939px;" width="20" height="20" viewBox="0 0 20 20" overflow="visible"><path d="M8 15 C7.5 12.5 5 11.5 5 8 C5 4.5 7.8 2 11 2 C14.2 2 17 4.5 17 8 C17 11.5 14.5 12.5 14 15 Z" fill="#EEE6F8" stroke="#8A5BC8" stroke-width="1.4"/><path d="M9 17 H13 M11 6 V12 M8.5 7.5 L11 10 L13.5 7.5" fill="none" stroke="#8A5BC8" stroke-width="1.2"/><path d="M1.5 18 L6.5 13" stroke="#8A5BC8" stroke-width="2.6" stroke-linecap="round"/><circle cx="7" cy="12.5" r="2.6" fill="#8A5BC8"/><circle cx="7.6" cy="11.9" r="1" fill="#F3F3F3"/></svg>
<svg style="position:absolute;left:137px;top:941px;" width="15" height="15" viewBox="0 0 15 15" overflow="visible"><circle cx="7.5" cy="7.5" r="7" fill="#1E8E1E"/><path d="M4 7.5 L6.5 10 L11 5.5" fill="none" stroke="#fff" stroke-width="1.6"/></svg>
<div class="t " style="left:157px;top:937px;font-size:14px;color:#1E1E1E;">未找到相关问题</div>
<div style="position:absolute;left:338px;top:940px;width:1px;height:18px;background:#A9AFC4;"></div>
<svg style="position:absolute;left:356px;top:940px;" width="18" height="18" viewBox="0 0 18 18" overflow="visible"><path d="M10.5 7 L15.5 2" stroke="#555" stroke-width="2.4" stroke-linecap="round"/><path d="M1.5 11.5 L7.5 6 L11.5 10 L6.5 16.5 Z" fill="#C99B2E" stroke="#B8861A" stroke-width="1" stroke-linejoin="round"/><path d="M4 11.5 L7 9 L8.5 10.5 L5.5 13.5Z" fill="#F0E2C0"/><circle cx="2.5" cy="4" r="1.5" fill="#2F86D6"/><circle cx="6.5" cy="2" r="1.4" fill="#2A6FB8"/></svg>
<svg style="position:absolute;left:378px;top:945.5px;" width="9" height="6" viewBox="0 0 9 6" overflow="visible"><path d="M0 0 H9 L4.5 5.5Z" fill="#1E1E1E"/></svg>
<div class="t " style="left:1354px;top:937px;font-size:14px;color:#1E1E1E;">行: 53</div>
<div class="t " style="left:1415px;top:937px;font-size:14px;color:#1E1E1E;">字符: 13</div>
<div class="t " style="left:1489px;top:937px;font-size:14px;color:#1E1E1E;">空格</div>
<div class="t " style="left:1543px;top:937px;font-size:14px;color:#1E1E1E;">CRLF</div>
<div class="t " style="left:8px;top:966px;font-size:15px;color:#1E1E1E;">错误列表</div>
<div style="position:absolute;left:8px;top:992px;width:60px;height:8px;background:#CCCEDB;"></div>
<div class="t " style="left:83px;top:966px;font-size:15px;color:#1E1E1E;">命令窗口</div>
<div style="position:absolute;left:83px;top:992px;width:60px;height:8px;background:#CCCEDB;"></div>
<div class="t " style="left:158px;top:966px;font-size:15px;color:#1E1E1E;">输出</div>
<div style="position:absolute;left:158px;top:992px;width:30px;height:8px;background:#CCCEDB;"></div>
<div class="t " style="left:203px;top:966px;font-size:15px;color:#1E1E1E;">程序包管理器控制台</div>
<div style="position:absolute;left:203px;top:992px;width:135px;height:8px;background:#CCCEDB;"></div>
<div style="position:absolute;left:0px;top:1000px;width:1920px;height:30px;background:#0067C0;"></div>
<svg style="position:absolute;left:5px;top:1005px;" width="21" height="21" viewBox="0 0 21 21" overflow="visible"><path d="M1 1 H19 V14 H11 L6.5 19 V14 H1 Z" fill="#2A7FD0" stroke="#fff" stroke-width="1.3"/></svg>
<div class="t " style="left:35px;top:1003px;font-size:15px;color:#FFFFFF;">就绪</div>
<svg style="position:absolute;left:1424px;top:1006px;" width="16" height="18" viewBox="0 0 16 18" overflow="visible"><path d="M4 17 V2 M1 5 L4 1.5 L7 5 M12 1 V16 M9 13 L12 16.5 L15 13" fill="none" stroke="#fff" stroke-width="1.5"/></svg>
<div class="t " style="left:1449px;top:1003px;font-size:16px;color:#FFFFFF;">0 / 0</div>
<svg style="position:absolute;left:1490px;top:1011px;" width="10" height="6" viewBox="0 0 10 6" overflow="visible"><path d="M0 5.5 L5 0.5 L10 5.5Z" fill="#fff"/></svg>
<svg style="position:absolute;left:1529px;top:1007px;" width="17" height="17" viewBox="0 0 17 17" overflow="visible"><path d="M2 15 L3 11 L12 2 L15 5 L6 14 Z M3 11 L6 14" fill="none" stroke="#fff" stroke-width="1.4"/></svg>
<div class="t " style="left:1553px;top:1003px;font-size:16px;color:#FFFFFF;">6</div>
<svg style="position:absolute;left:1592px;top:1005px;" width="20" height="22" viewBox="0 0 20 22" overflow="visible"><circle cx="4" cy="4" r="2.6" fill="none" stroke="#fff" stroke-width="1.3"/><circle cx="15" cy="6" r="2.6" fill="none" stroke="#fff" stroke-width="1.3"/><path d="M4 6.5 V16 M4 11 C4 9 15 10 15 8.5" fill="none" stroke="#fff" stroke-width="1.3"/><circle cx="5" cy="17" r="4" fill="#fff"/><path d="M5 19.5 V15 M3 17 L5 15 L7 17" fill="none" stroke="#0067C0" stroke-width="1.2"/></svg>
<div class="t " style="left:1619px;top:1003px;font-size:16px;color:#FFFFFF;">master</div>
<div style="position:absolute;left:1682px;top:998px;width:238px;height:32px;background:#FFFFFF;border-top:1px solid #C8D0E0;border-left:1px solid #C8D0E0"></div>
<svg style="position:absolute;left:1668px;top:996px;" width="42" height="34" viewBox="0 0 42 34" overflow="visible"><path d="M6 5 L35 1 L40 27 L10 33 Z" fill="#F2552C"/><path d="M30 10 C25 7 15 8 15 13 C15 17 28 16 28 21 C28 26 18 27 13 23" fill="none" stroke="#fff" stroke-width="4.5" stroke-linecap="round"/></svg>
<div class="t " style="left:1714px;top:1003px;font-size:18px;color:#1B6FD8;font-weight:bold">中</div>
<svg style="position:absolute;left:1746px;top:1006px;" width="18" height="18" viewBox="0 0 18 18" overflow="visible"><circle cx="4" cy="6" r="2" fill="#1B6FD8"/><path d="M13 8 C15 9 14 13 11 15" fill="none" stroke="#1B6FD8" stroke-width="2.6" stroke-linecap="round"/></svg>
<svg style="position:absolute;left:1775px;top:1003px;" width="16" height="24" viewBox="0 0 16 24" overflow="visible"><rect x="4" y="1" width="8" height="14" rx="4" fill="#1B6FD8"/><path d="M1.5 10 C1.5 15 4 17.5 8 17.5 C12 17.5 14.5 15 14.5 10 M8 17.5 V22 M4 22.5 H12" fill="none" stroke="#1B6FD8" stroke-width="1.6"/></svg>
<svg style="position:absolute;left:1804px;top:1005px;" width="22" height="18" viewBox="0 0 22 18" overflow="visible"><rect x="1" y="1" width="20" height="15" rx="2" fill="none" stroke="#1B6FD8" stroke-width="1.8"/><g fill="#1B6FD8"><rect x="4" y="4" width="2.2" height="2.2"/><rect x="8" y="4" width="2.2" height="2.2"/><rect x="12" y="4" width="2.2" height="2.2"/><rect x="16" y="4" width="2.2" height="2.2"/><rect x="4" y="8" width="2.2" height="2.2"/><rect x="8" y="8" width="2.2" height="2.2"/><rect x="12" y="8" width="2.2" height="2.2"/><rect x="16" y="8" width="2.2" height="2.2"/><rect x="5" y="12" width="12" height="2"/></g></svg>
<svg style="position:absolute;left:1833px;top:1004px;" width="24" height="22" viewBox="0 0 24 22" overflow="visible"><path d="M7 1 C9 3 15 3 17 1 L23 5 L20 10 L18 9 V21 H6 V9 L4 10 L1 5 Z" fill="#FF4F1E"/></svg>
<svg style="position:absolute;left:1864px;top:1005px;" width="20" height="20" viewBox="0 0 20 20" overflow="visible"><g fill="#1B6FD8"><rect x="1" y="1" width="8" height="8" rx="2"/><rect x="11" y="1" width="8" height="8" rx="4"/><rect x="1" y="11" width="8" height="8" rx="2"/><rect x="11" y="11" width="8" height="8" rx="2"/></g></svg>
<svg style="position:absolute;left:1890px;top:1001px;" width="30" height="29" viewBox="0 0 30 29" overflow="visible"><circle cx="14" cy="16" r="12" fill="#F2F2F2" stroke="#E0E0E0"/><path d="M4 13 L22 10 L23 16 L6 19Z" fill="#E07030"/><circle cx="11" cy="15" r="2" fill="#333"/><path d="M26 2 L27 6 L30 7 L27 8 L26 12 L25 8 L22 7 L25 6Z" fill="#F7C600"/></svg>
<div style="position:absolute;left:1596px;top:88px;width:285px;height:873px;background:#F5F5F5;border:1px solid #CCCEDB"></div>
<div style="position:absolute;left:1597px;top:89px;width:283px;height:89px;background:#EEEEF2;"></div>
<div class="t " style="left:1601px;top:90px;font-size:15px;color:#1E1E1E;">解决方案资源管理器</div>
<svg style="position:absolute;left:1746px;top:99px;" width="62" height="6" viewBox="0 0 62 6" overflow="visible"><rect x="0" y="0" width="1" height="1" fill="#B0B0B0"/><rect x="1" y="2" width="1" height="1" fill="#B0B0B0"/><rect x="0" y="4" width="1" height="1" fill="#B0B0B0"/><rect x="2" y="0" width="1" height="1" fill="#B0B0B0"/><rect x="3" y="2" width="1" height="1" fill="#B0B0B0"/><rect x="2" y="4" width="1" height="1" fill="#B0B0B0"/><rect x="4" y="0" width="1" height="1" fill="#B0B0B0"/><rect x="5" y="2" width="1" height="1" fill="#B0B0B0"/><rect x="4" y="4" width="1" height="1" fill="#B0B0B0"/><rect x="6" y="0" width="1" height="1" fill="#B0B0B0"/><rect x="7" y="2" width="1" height="1" fill="#B0B0B0"/><rect x="6" y="4" width="1" height="1" fill="#B0B0B0"/><rect x="8" y="0" width="1" height="1" fill="#B0B0B0"/><rect x="9" y="2" width="1" height="1" fill="#B0B0B0"/><rect x="8" y="4" width="1" height="1" fill="#B0B0B0"/><rect x="10" y="0" width="1" height="1" fill="#B0B0B0"/><rect x="11" y="2" width="1" height="1" fill="#B0B0B0"/><rect x="10" y="4" width="1" height="1" fill="#B0B0B0"/><rect x="12" y="0" width="1" height="1" fill="#B0B0B0"/><rect x="13" y="2" width="1" height="1" fill="#B0B0B0"/><rect x="12" y="4" width="1" height="1" fill="#B0B0B0"/><rect x="14" y="0" width="1" height="1" fill="#B0B0B0"/><rect x="15" y="2" width="1" height="1" fill="#B0B0B0"/><rect x="14" y="4" width="1" height="1" fill="#B0B0B0"/><rect x="16" y="0" width="1" height="1" fill="#B0B0B0"/><rect x="17" y="2" width="1" height="1" fill="#B0B0B0"/><rect x="16" y="4" width="1" height="1" fill="#B0B0B0"/><rect x="18" y="0" width="1" height="1" fill="#B0B0B0"/><rect x="19" y="2" width="1" height="1" fill="#B0B0B0"/><rect x="18" y="4" width="1" height="1" fill="#B0B0B0"/><rect x="20" y="0" width="1" height="1" fill="#B0B0B0"/><rect x="21" y="2" width="1" height="1" fill="#B0B0B0"/><rect x="20" y="4" width="1" height="1" fill="#B0B0B0"/><rect x="22" y="0" width="1" height="1" fill="#B0B0B0"/><rect x="23" y="2" width="1" height="1" fill="#B0B0B0"/><rect x="22" y="4" width="1" height="1" fill="#B0B0B0"/><rect x="24" y="0" width="1" height="1" fill="#B0B0B0"/><rect x="25" y="2" width="1" height="1" fill="#B0B0B0"/><rect x="24" y="4" width="1" height="1" fill="#B0B0B0"/><rect x="26" y="0" width="1" height="1" fill="#B0B0B0"/><rect x="27" y="2" width="1" height="1" fill="#B0B0B0"/><rect x="26" y="4" width="1" height="1" fill="#B0B0B0"/><rect x="28" y="0" width="1" height="1" fill="#B0B0B0"/><rect x="29" y="2" width="1" height="1" fill="#B0B0B0"/><rect x="28" y="4" width="1" height="1" fill="#B0B0B0"/><rect x="30" y="0" width="1" height="1" fill="#B0B0B0"/><rect x="31" y="2" width="1" height="1" fill="#B0B0B0"/><rect x="30" y="4" width="1" height="1" fill="#B0B0B0"/><rect x="32" y="0" width="1" height="1" fill="#B0B0B0"/><rect x="33" y="2" width="1" height="1" fill="#B0B0B0"/><rect x="32" y="4" width="1" height="1" fill="#B0B0B0"/><rect x="34" y="0" width="1" height="1" fill="#B0B0B0"/><rect x="35" y="2" width="1" height="1" fill="#B0B0B0"/><rect x="34" y="4" width="1" height="1" fill="#B0B0B0"/><rect x="36" y="0" width="1" height="1" fill="#B0B0B0"/><rect x="37" y="2" width="1" height="1" fill="#B0B0B0"/><rect x="36" y="4" width="1" height="1" fill="#B0B0B0"/><rect x="38" y="0" width="1" height="1" fill="#B0B0B0"/><rect x="39" y="2" width="1" height="1" fill="#B0B0B0"/><rect x="38" y="4" width="1" height="1" fill="#B0B0B0"/><rect x="40" y="0" width="1" height="1" fill="#B0B0B0"/><rect x="41" y="2" width="1" height="1" fill="#B0B0B0"/><rect x="40" y="4" width="1" height="1" fill="#B0B0B0"/><rect x="42" y="0" width="1" height="1" fill="#B0B0B0"/><rect x="43" y="2" width="1" height="1" fill="#B0B0B0"/><rect x="42" y="4" width="1" height="1" fill="#B0B0B0"/><rect x="44" y="0" width="1" height="1" fill="#B0B0B0"/><rect x="45" y="2" width="1" height="1" fill="#B0B0B0"/><rect x="44" y="4" width="1" height="1" fill="#B0B0B0"/><rect x="46" y="0" width="1" height="1" fill="#B0B0B0"/><rect x="47" y="2" width="1" height="1" fill="#B0B0B0"/><rect x="46" y="4" width="1" height="1" fill="#B0B0B0"/><rect x="48" y="0" width="1" height="1" fill="#B0B0B0"/><rect x="49" y="2" width="1" height="1" fill="#B0B0B0"/><rect x="48" y="4" width="1" height="1" fill="#B0B0B0"/><rect x="50" y="0" width="1" height="1" fill="#B0B0B0"/><rect x="51" y="2" width="1" height="1" fill="#B0B0B0"/><rect x="50" y="4" width="1" height="1" fill="#B0B0B0"/><rect x="52" y="0" width="1" height="1" fill="#B0B0B0"/><rect x="53" y="2" width="1" height="1" fill="#B0B0B0"/><rect x="52" y="4" width="1" height="1" fill="#B0B0B0"/><rect x="54" y="0" width="1" height="1" fill="#B0B0B0"/><rect x="55" y="2" width="1" height="1" fill="#B0B0B0"/><rect x="54" y="4" width="1" height="1" fill="#B0B0B0"/><rect x="56" y="0" width="1" height="1" fill="#B0B0B0"/><rect x="57" y="2" width="1" height="1" fill="#B0B0B0"/><rect x="56" y="4" width="1" height="1" fill="#B0B0B0"/><rect x="58" y="0" width="1" height="1" fill="#B0B0B0"/><rect x="59" y="2" width="1" height="1" fill="#B0B0B0"/><rect x="58" y="4" width="1" height="1" fill="#B0B0B0"/><rect x="60" y="0" width="1" height="1" fill="#B0B0B0"/><rect x="61" y="2" width="1" height="1" fill="#B0B0B0"/><rect x="60" y="4" width="1" height="1" fill="#B0B0B0"/></svg>
<svg style="position:absolute;left:1818px;top:98px;" width="13" height="8" viewBox="0 0 13 8" overflow="visible"><path d="M0 0.5 H12 L6 7Z" fill="#1E1E1E"/></svg>
<svg style="position:absolute;left:1837px;top:94px;" width="12" height="16" viewBox="0 0 12 16" overflow="visible"><path d="M3 1 H9 M4 1 V9 M8 1 V9 M1 9 H11 M6 9 V15" fill="none" stroke="#1E1E1E" stroke-width="1.6"/><rect x="4" y="1" width="4" height="8" fill="#1E1E1E"/></svg>
<svg style="position:absolute;left:1857px;top:95px;" width="14" height="14" viewBox="0 0 14 14" overflow="visible"><path d="M1 1 L13 13 M13 1 L1 13" stroke="#1E1E1E" stroke-width="1.6"/></svg>
<svg style="position:absolute;left:1603px;top:122px;" width="23" height="22" viewBox="0 0 23 22" overflow="visible"><rect x="9" y="1" width="12" height="14" fill="#E6E6E6" stroke="#333" stroke-width="1.3"/><path d="M9 3.5 H21" stroke="#333" stroke-width="2"/><g stroke="#333" stroke-width="1"><path d="M12 7 H19 M12 9.5 H19 M12 12 H19"/></g><path d="M1 12 L9 17.5 L9 9 Z M1 17.5 L9 12" fill="none" stroke="#8A5BC8" stroke-width="1.8"/></svg>
<div style="position:absolute;left:1633px;top:121px;width:1px;height:25px;background:#CCCEDB;"></div>
<svg style="position:absolute;left:1644px;top:121px;" width="20" height="24" viewBox="0 0 20 24" overflow="visible"><path d="M1 1 H7 L4 4.5Z" fill="#1B7AD6"/><circle cx="11" cy="14.5" r="7.2" fill="#E8E8E8" stroke="#333" stroke-width="1.4"/><path d="M11 10 V15 H14.5" fill="none" stroke="#333" stroke-width="1.3"/></svg>
<svg style="position:absolute;left:1669px;top:131px;" width="8" height="5" viewBox="0 0 8 5" overflow="visible"><path d="M0 0 H7 L3.5 4Z" fill="#717171"/></svg>
<svg style="position:absolute;left:1685px;top:125px;" width="18" height="14" viewBox="0 0 18 14" overflow="visible"><path d="M1 4 H16 M4 1 L1 4 M17 10 H2 M14 13 L17 10" fill="none" stroke="#333" stroke-width="1.4"/></svg>
<svg style="position:absolute;left:1711px;top:122px;" width="21" height="22" viewBox="0 0 21 22" overflow="visible"><rect x="4" y="1" width="16" height="17" fill="#DADADA" stroke="#333" stroke-width="1.3"/><rect x="1" y="4" width="16" height="17" fill="#E6E6E6" stroke="#333" stroke-width="1.3"/><path d="M5 12.5 H13" stroke="#333" stroke-width="1.6"/></svg>
<svg style="position:absolute;left:1738px;top:123px;" width="20" height="20" viewBox="0 0 20 20" overflow="visible"><rect x="5" y="1" width="14" height="13" fill="#E6E6E6" stroke="#555" stroke-width="1.3"/><rect x="1" y="5" width="13" height="14" fill="#DADADA" stroke="#555" stroke-width="1.3"/><rect x="6" y="6" width="7" height="7" fill="#C8C8C8"/></svg>
<div style="position:absolute;left:1766px;top:121px;width:1px;height:25px;background:#CCCEDB;"></div>
<div style="position:absolute;left:1773px;top:119px;width:27px;height:28px;background:#F5F2EE;border:1px solid #2A8CE8"></div>
<svg style="position:absolute;left:1777px;top:123px;" width="19" height="20" viewBox="0 0 19 20" overflow="visible"><g fill="none" stroke="#333" stroke-width="1.4"><circle cx="3.5" cy="3.5" r="2.2"/><rect x="6.5" y="8" width="4" height="4"/><rect x="12" y="13.5" width="5" height="5"/><path d="M3.5 6 V10 H6.5 M8.5 12 V16 H12"/></g></svg>
<svg style="position:absolute;left:1804px;top:131px;" width="8" height="5" viewBox="0 0 8 5" overflow="visible"><path d="M0 0 H7 L3.5 4Z" fill="#717171"/></svg>
<div style="position:absolute;left:1818px;top:121px;width:1px;height:25px;background:#CCCEDB;"></div>
<svg style="position:absolute;left:1827px;top:123px;" width="20" height="20" viewBox="0 0 20 20" overflow="visible"><path d="M2 18 L11 9" stroke="#333" stroke-width="2.5" stroke-linecap="round"/><path d="M10 10 C8 7 9 3 12 1.5 C14 0.8 16 1 17 2 L13.5 5.5 L15 7.5 L18.5 4 C19.5 6 19 9 17 10.5 C15 12 12.5 12 10 10Z" fill="#333"/></svg>
<svg style="position:absolute;left:1867px;top:121px;" width="10" height="7" viewBox="0 0 10 7" overflow="visible"><path d="M0 0.5 L3 3.5 L0 6.5Z M5 0.5 L8 3.5 L5 6.5Z" fill="#888"/></svg>
<div style="position:absolute;left:1600px;top:150px;width:277px;height:27px;background:#FFFFFF;border:1px solid #CCCEDB"></div>
<div class="t " style="left:1605px;top:152.5px;font-size:15px;color:#6D6D6D;">搜索解决方案资源管理器(Ctrl+;)</div>
<svg style="position:absolute;left:1842px;top:155px;" width="18" height="18" viewBox="0 0 18 18" overflow="visible"><circle cx="11" cy="6.5" r="4.8" fill="none" stroke="#555" stroke-width="2"/><path d="M7.5 10 L2 15.5" stroke="#555" stroke-width="2.6" stroke-linecap="round"/></svg>
<svg style="position:absolute;left:1866px;top:161px;" width="8" height="5" viewBox="0 0 8 5" overflow="visible"><path d="M0 0 H7 L3.5 4Z" fill="#717171"/></svg>
<div style="position:absolute;left:1598px;top:179px;width:261px;height:738px;overflow:hidden">
<svg style="position:absolute;left:57.8px;top:5.5px" width="8" height="13" viewBox="0 0 8 13"><path d="M1 1.2 L6.6 6.5 L1 11.8 Z" fill="none" stroke="#1E1E1E" stroke-width="1.3"/></svg>
<svg style="position:absolute;left:72.8px;top:7.5px" width="9" height="11" viewBox="0 0 9 11"><path d="M2.2 4.5 V3.2 C2.2 1.6 3.1 0.8 4.5 0.8 C5.9 0.8 6.8 1.6 6.8 3.2 V4.5" fill="none" stroke="#1F7BD0" stroke-width="1.3"/><rect x="0.8" y="4.6" width="7.4" height="5.6" rx="0.7" fill="#DCE8F4" stroke="#1F7BD0" stroke-width="1.3"/></svg>
<svg style="position:absolute;left:85.8px;top:5.2px" width="19" height="15" viewBox="0 0 19 15"><path d="M0.9 0.9 H7.5 L9 2.4 H17.6 V13.6 H0.9 Z" fill="#D4B97A" stroke="#B98A22" stroke-width="1.3" stroke-linejoin="round"/><path d="M1.2 3.4 H8.5" stroke="#B98A22" stroke-width="1"/></svg>
<div class="t" style="left:109.8px;top:2px;font-size:16px;color:#1E1E1E;">IntegrationEvents</div>
<svg style="position:absolute;left:57.8px;top:31.3px" width="9" height="9" viewBox="0 0 9 9"><path d="M8.2 0.5 V8.2 H0.3 Z" fill="#1E1E1E"/></svg>
<svg style="position:absolute;left:72.8px;top:31.5px" width="9" height="11" viewBox="0 0 9 11"><path d="M2.2 4.5 V3.2 C2.2 1.6 3.1 0.8 4.5 0.8 C5.9 0.8 6.8 1.6 6.8 3.2 V4.5" fill="none" stroke="#1F7BD0" stroke-width="1.3"/><rect x="0.8" y="4.6" width="7.4" height="5.6" rx="0.7" fill="#DCE8F4" stroke="#1F7BD0" stroke-width="1.3"/></svg>
<svg style="position:absolute;left:85.8px;top:29.2px" width="19" height="15" viewBox="0 0 19 15"><path d="M0.9 0.9 H7.5 L9 2.4 H17.6 V13.6 H0.9 Z" fill="#D4B97A" stroke="#B98A22" stroke-width="1.3" stroke-linejoin="round"/><path d="M1.2 3.4 H8.5" stroke="#B98A22" stroke-width="1"/></svg>
<div class="t" style="left:109.8px;top:26px;font-size:16px;color:#1E1E1E;">Model</div>
<svg style="position:absolute;left:80.0px;top:53.5px" width="8" height="13" viewBox="0 0 8 13"><path d="M1 1.2 L6.6 6.5 L1 11.8 Z" fill="none" stroke="#1E1E1E" stroke-width="1.3"/></svg>
<svg style="position:absolute;left:95.0px;top:55.5px" width="9" height="11" viewBox="0 0 9 11"><path d="M2.2 4.5 V3.2 C2.2 1.6 3.1 0.8 4.5 0.8 C5.9 0.8 6.8 1.6 6.8 3.2 V4.5" fill="none" stroke="#1F7BD0" stroke-width="1.3"/><rect x="0.8" y="4.6" width="7.4" height="5.6" rx="0.7" fill="#DCE8F4" stroke="#1F7BD0" stroke-width="1.3"/></svg>
<svg style="position:absolute;left:108.0px;top:50px" width="22" height="22" viewBox="0 0 22 22" overflow="visible"><path d="M8 8.2 A4 4.1 0 1 0 8 13.8" fill="none" stroke="#2E9E3E" stroke-width="1.9"/><g stroke="#2E9E3E" stroke-width="1.5"><path d="M10.5 8.5 H18.8 M10.5 11.6 H18.8 M13 6 V13.8 M16.3 6 V13.8"/></g></svg>
<div class="t" style="left:132.0px;top:50px;font-size:16px;color:#1E1E1E;">CatalogBrand.cs</div>
<svg style="position:absolute;left:80.0px;top:77.5px" width="8" height="13" viewBox="0 0 8 13"><path d="M1 1.2 L6.6 6.5 L1 11.8 Z" fill="none" stroke="#1E1E1E" stroke-width="1.3"/></svg>
<svg style="position:absolute;left:95.0px;top:79.5px" width="9" height="11" viewBox="0 0 9 11"><path d="M2.2 4.5 V3.2 C2.2 1.6 3.1 0.8 4.5 0.8 C5.9 0.8 6.8 1.6 6.8 3.2 V4.5" fill="none" stroke="#1F7BD0" stroke-width="1.3"/><rect x="0.8" y="4.6" width="7.4" height="5.6" rx="0.7" fill="#DCE8F4" stroke="#1F7BD0" stroke-width="1.3"/></svg>
<svg style="position:absolute;left:108.0px;top:74px" width="22" height="22" viewBox="0 0 22 22" overflow="visible"><path d="M8 8.2 A4 4.1 0 1 0 8 13.8" fill="none" stroke="#2E9E3E" stroke-width="1.9"/><g stroke="#2E9E3E" stroke-width="1.5"><path d="M10.5 8.5 H18.8 M10.5 11.6 H18.8 M13 6 V13.8 M16.3 6 V13.8"/></g></svg>
<div class="t" style="left:132.0px;top:74px;font-size:16px;color:#1E1E1E;">CatalogItem.cs</div>
<svg style="position:absolute;left:80.0px;top:101.5px" width="8" height="13" viewBox="0 0 8 13"><path d="M1 1.2 L6.6 6.5 L1 11.8 Z" fill="none" stroke="#1E1E1E" stroke-width="1.3"/></svg>
<svg style="position:absolute;left:95.0px;top:103.5px" width="9" height="11" viewBox="0 0 9 11"><path d="M2.2 4.5 V3.2 C2.2 1.6 3.1 0.8 4.5 0.8 C5.9 0.8 6.8 1.6 6.8 3.2 V4.5" fill="none" stroke="#1F7BD0" stroke-width="1.3"/><rect x="0.8" y="4.6" width="7.4" height="5.6" rx="0.7" fill="#DCE8F4" stroke="#1F7BD0" stroke-width="1.3"/></svg>
<svg style="position:absolute;left:108.0px;top:98px" width="22" height="22" viewBox="0 0 22 22" overflow="visible"><path d="M8 8.2 A4 4.1 0 1 0 8 13.8" fill="none" stroke="#2E9E3E" stroke-width="1.9"/><g stroke="#2E9E3E" stroke-width="1.5"><path d="M10.5 8.5 H18.8 M10.5 11.6 H18.8 M13 6 V13.8 M16.3 6 V13.8"/></g></svg>
<div class="t" style="left:132.0px;top:98px;font-size:16px;color:#1E1E1E;">CatalogServices.cs</div>
<svg style="position:absolute;left:80.0px;top:125.5px" width="8" height="13" viewBox="0 0 8 13"><path d="M1 1.2 L6.6 6.5 L1 11.8 Z" fill="none" stroke="#1E1E1E" stroke-width="1.3"/></svg>
<svg style="position:absolute;left:95.0px;top:127.5px" width="9" height="11" viewBox="0 0 9 11"><path d="M2.2 4.5 V3.2 C2.2 1.6 3.1 0.8 4.5 0.8 C5.9 0.8 6.8 1.6 6.8 3.2 V4.5" fill="none" stroke="#1F7BD0" stroke-width="1.3"/><rect x="0.8" y="4.6" width="7.4" height="5.6" rx="0.7" fill="#DCE8F4" stroke="#1F7BD0" stroke-width="1.3"/></svg>
<svg style="position:absolute;left:108.0px;top:122px" width="22" height="22" viewBox="0 0 22 22" overflow="visible"><path d="M8 8.2 A4 4.1 0 1 0 8 13.8" fill="none" stroke="#2E9E3E" stroke-width="1.9"/><g stroke="#2E9E3E" stroke-width="1.5"><path d="M10.5 8.5 H18.8 M10.5 11.6 H18.8 M13 6 V13.8 M16.3 6 V13.8"/></g></svg>
<div class="t" style="left:132.0px;top:122px;font-size:16px;color:#1E1E1E;">CatalogType.cs</div>
<svg style="position:absolute;left:80.0px;top:149.5px" width="8" height="13" viewBox="0 0 8 13"><path d="M1 1.2 L6.6 6.5 L1 11.8 Z" fill="none" stroke="#1E1E1E" stroke-width="1.3"/></svg>
<svg style="position:absolute;left:95.0px;top:151.5px" width="9" height="11" viewBox="0 0 9 11"><path d="M2.2 4.5 V3.2 C2.2 1.6 3.1 0.8 4.5 0.8 C5.9 0.8 6.8 1.6 6.8 3.2 V4.5" fill="none" stroke="#1F7BD0" stroke-width="1.3"/><rect x="0.8" y="4.6" width="7.4" height="5.6" rx="0.7" fill="#DCE8F4" stroke="#1F7BD0" stroke-width="1.3"/></svg>
<svg style="position:absolute;left:108.0px;top:146px" width="22" height="22" viewBox="0 0 22 22" overflow="visible"><path d="M8 8.2 A4 4.1 0 1 0 8 13.8" fill="none" stroke="#2E9E3E" stroke-width="1.9"/><g stroke="#2E9E3E" stroke-width="1.5"><path d="M10.5 8.5 H18.8 M10.5 11.6 H18.8 M13 6 V13.8 M16.3 6 V13.8"/></g></svg>
<div class="t" style="left:132.0px;top:146px;font-size:16px;color:#1E1E1E;">PaginatedItems.cs</div>
<svg style="position:absolute;left:80.0px;top:173.5px" width="8" height="13" viewBox="0 0 8 13"><path d="M1 1.2 L6.6 6.5 L1 11.8 Z" fill="none" stroke="#1E1E1E" stroke-width="1.3"/></svg>
<svg style="position:absolute;left:95.0px;top:175.5px" width="9" height="11" viewBox="0 0 9 11"><path d="M2.2 4.5 V3.2 C2.2 1.6 3.1 0.8 4.5 0.8 C5.9 0.8 6.8 1.6 6.8 3.2 V4.5" fill="none" stroke="#1F7BD0" stroke-width="1.3"/><rect x="0.8" y="4.6" width="7.4" height="5.6" rx="0.7" fill="#DCE8F4" stroke="#1F7BD0" stroke-width="1.3"/></svg>
<svg style="position:absolute;left:108.0px;top:170px" width="22" height="22" viewBox="0 0 22 22" overflow="visible"><path d="M8 8.2 A4 4.1 0 1 0 8 13.8" fill="none" stroke="#2E9E3E" stroke-width="1.9"/><g stroke="#2E9E3E" stroke-width="1.5"><path d="M10.5 8.5 H18.8 M10.5 11.6 H18.8 M13 6 V13.8 M16.3 6 V13.8"/></g></svg>
<div class="t" style="left:132.0px;top:170px;font-size:16px;color:#1E1E1E;">PaginationRequest.cs</div>
<svg style="position:absolute;left:57.8px;top:197.5px" width="8" height="13" viewBox="0 0 8 13"><path d="M1 1.2 L6.6 6.5 L1 11.8 Z" fill="none" stroke="#1E1E1E" stroke-width="1.3"/></svg>
<svg style="position:absolute;left:72.8px;top:199.5px" width="9" height="11" viewBox="0 0 9 11"><path d="M2.2 4.5 V3.2 C2.2 1.6 3.1 0.8 4.5 0.8 C5.9 0.8 6.8 1.6 6.8 3.2 V4.5" fill="none" stroke="#1F7BD0" stroke-width="1.3"/><rect x="0.8" y="4.6" width="7.4" height="5.6" rx="0.7" fill="#DCE8F4" stroke="#1F7BD0" stroke-width="1.3"/></svg>
<svg style="position:absolute;left:85.8px;top:197.2px" width="19" height="15" viewBox="0 0 19 15"><path d="M0.9 0.9 H7.5 L9 2.4 H17.6 V13.6 H0.9 Z" fill="#D4B97A" stroke="#B98A22" stroke-width="1.3" stroke-linejoin="round"/><path d="M1.2 3.4 H8.5" stroke="#B98A22" stroke-width="1"/></svg>
<div class="t" style="left:109.8px;top:194px;font-size:16px;color:#1E1E1E;">Pics</div>
<svg style="position:absolute;left:57.8px;top:221.5px" width="8" height="13" viewBox="0 0 8 13"><path d="M1 1.2 L6.6 6.5 L1 11.8 Z" fill="none" stroke="#1E1E1E" stroke-width="1.3"/></svg>
<svg style="position:absolute;left:72.8px;top:223.5px" width="9" height="11" viewBox="0 0 9 11"><path d="M2.2 4.5 V3.2 C2.2 1.6 3.1 0.8 4.5 0.8 C5.9 0.8 6.8 1.6 6.8 3.2 V4.5" fill="none" stroke="#1F7BD0" stroke-width="1.3"/><rect x="0.8" y="4.6" width="7.4" height="5.6" rx="0.7" fill="#DCE8F4" stroke="#1F7BD0" stroke-width="1.3"/></svg>
<svg style="position:absolute;left:85.8px;top:221.2px" width="19" height="15" viewBox="0 0 19 15"><path d="M0.9 0.9 H7.5 L9 2.4 H17.6 V13.6 H0.9 Z" fill="#D4B97A" stroke="#B98A22" stroke-width="1.3" stroke-linejoin="round"/><path d="M1.2 3.4 H8.5" stroke="#B98A22" stroke-width="1"/></svg>
<div class="t" style="left:109.8px;top:218px;font-size:16px;color:#1E1E1E;">Services</div>
<svg style="position:absolute;left:57.8px;top:247.3px" width="9" height="9" viewBox="0 0 9 9"><path d="M8.2 0.5 V8.2 H0.3 Z" fill="#1E1E1E"/></svg>
<svg style="position:absolute;left:72.8px;top:247.5px" width="9" height="11" viewBox="0 0 9 11"><path d="M2.2 4.5 V3.2 C2.2 1.6 3.1 0.8 4.5 0.8 C5.9 0.8 6.8 1.6 6.8 3.2 V4.5" fill="none" stroke="#1F7BD0" stroke-width="1.3"/><rect x="0.8" y="4.6" width="7.4" height="5.6" rx="0.7" fill="#DCE8F4" stroke="#1F7BD0" stroke-width="1.3"/></svg>
<svg style="position:absolute;left:85.8px;top:245.2px" width="19" height="15" viewBox="0 0 19 15"><path d="M0.9 0.9 H7.5 L9 2.4 H17.6 V13.6 H0.9 Z" fill="#D4B97A" stroke="#B98A22" stroke-width="1.3" stroke-linejoin="round"/><path d="M1.2 3.4 H8.5" stroke="#B98A22" stroke-width="1"/></svg>
<div class="t" style="left:109.8px;top:242px;font-size:16px;color:#1E1E1E;">Setup</div>
<svg style="position:absolute;left:95.0px;top:271.5px" width="9" height="11" viewBox="0 0 9 11"><path d="M2.2 4.5 V3.2 C2.2 1.6 3.1 0.8 4.5 0.8 C5.9 0.8 6.8 1.6 6.8 3.2 V4.5" fill="none" stroke="#1F7BD0" stroke-width="1.3"/><rect x="0.8" y="4.6" width="7.4" height="5.6" rx="0.7" fill="#DCE8F4" stroke="#1F7BD0" stroke-width="1.3"/></svg>
<svg style="position:absolute;left:108.0px;top:266px" width="22" height="22" viewBox="0 0 22 22" overflow="visible"><path d="M2.4 2.9 H12.8 L16.6 6.7 V19.2 H2.4 Z" fill="#E4E4E4" stroke="#777" stroke-width="1.4" stroke-linejoin="round"/><path d="M12.5 3 V7 H16.5" fill="#999" stroke="#999" stroke-width="0.8"/><path d="M7.6 8.5 C6.4 8.5 6.6 9.5 6.6 11 C6.6 12 6 12.3 5.6 12.3 C6 12.3 6.6 12.6 6.6 13.6 C6.6 15 6.4 16 7.6 16 M11.4 8.5 C12.6 8.5 12.4 9.5 12.4 11 C12.4 12 13 12.3 13.4 12.3 C13 12.3 12.4 12.6 12.4 13.6 C12.4 15 12.6 16 11.4 16" fill="none" stroke="#333" stroke-width="1.1"/></svg>
<div class="t" style="left:132.0px;top:266px;font-size:16px;color:#1E1E1E;">catalog.json</div>
<svg style="position:absolute;left:57.8px;top:295.3px" width="9" height="9" viewBox="0 0 9 9"><path d="M8.2 0.5 V8.2 H0.3 Z" fill="#1E1E1E"/></svg>
<svg style="position:absolute;left:72.8px;top:295.5px" width="9" height="11" viewBox="0 0 9 11"><path d="M2.2 4.5 V3.2 C2.2 1.6 3.1 0.8 4.5 0.8 C5.9 0.8 6.8 1.6 6.8 3.2 V4.5" fill="none" stroke="#1F7BD0" stroke-width="1.3"/><rect x="0.8" y="4.6" width="7.4" height="5.6" rx="0.7" fill="#DCE8F4" stroke="#1F7BD0" stroke-width="1.3"/></svg>
<svg style="position:absolute;left:85.8px;top:290px" width="22" height="22" viewBox="0 0 22 22" overflow="visible"><path d="M2.4 2.9 H12.8 L16.6 6.7 V19.2 H2.4 Z" fill="#E4E4E4" stroke="#777" stroke-width="1.4" stroke-linejoin="round"/><path d="M12.5 3 V7 H16.5" fill="#999" stroke="#999" stroke-width="0.8"/><path d="M7.6 8.5 C6.4 8.5 6.6 9.5 6.6 11 C6.6 12 6 12.3 5.6 12.3 C6 12.3 6.6 12.6 6.6 13.6 C6.6 15 6.4 16 7.6 16 M11.4 8.5 C12.6 8.5 12.4 9.5 12.4 11 C12.4 12 13 12.3 13.4 12.3 C13 12.3 12.4 12.6 12.4 13.6 C12.4 15 12.6 16 11.4 16" fill="none" stroke="#333" stroke-width="1.1"/></svg>
<div class="t" style="left:109.8px;top:290px;font-size:16px;color:#1E1E1E;">appsettings.json</div>
<svg style="position:absolute;left:95.0px;top:319.5px" width="9" height="11" viewBox="0 0 9 11"><path d="M2.2 4.5 V3.2 C2.2 1.6 3.1 0.8 4.5 0.8 C5.9 0.8 6.8 1.6 6.8 3.2 V4.5" fill="none" stroke="#1F7BD0" stroke-width="1.3"/><rect x="0.8" y="4.6" width="7.4" height="5.6" rx="0.7" fill="#DCE8F4" stroke="#1F7BD0" stroke-width="1.3"/></svg>
<svg style="position:absolute;left:108.0px;top:314px" width="22" height="22" viewBox="0 0 22 22" overflow="visible"><path d="M2.4 2.9 H12.8 L16.6 6.7 V19.2 H2.4 Z" fill="#E4E4E4" stroke="#777" stroke-width="1.4" stroke-linejoin="round"/><path d="M12.5 3 V7 H16.5" fill="#999" stroke="#999" stroke-width="0.8"/><path d="M7.6 8.5 C6.4 8.5 6.6 9.5 6.6 11 C6.6 12 6 12.3 5.6 12.3 C6 12.3 6.6 12.6 6.6 13.6 C6.6 15 6.4 16 7.6 16 M11.4 8.5 C12.6 8.5 12.4 9.5 12.4 11 C12.4 12 13 12.3 13.4 12.3 C13 12.3 12.4 12.6 12.4 13.6 C12.4 15 12.6 16 11.4 16" fill="none" stroke="#333" stroke-width="1.1"/></svg>
<div class="t" style="left:132.0px;top:314px;font-size:16px;color:#1E1E1E;">appsettings.Development.json</div>
<svg style="position:absolute;left:72.8px;top:343.5px" width="9" height="11" viewBox="0 0 9 11"><path d="M2.2 4.5 V3.2 C2.2 1.6 3.1 0.8 4.5 0.8 C5.9 0.8 6.8 1.6 6.8 3.2 V4.5" fill="none" stroke="#1F7BD0" stroke-width="1.3"/><rect x="0.8" y="4.6" width="7.4" height="5.6" rx="0.7" fill="#DCE8F4" stroke="#1F7BD0" stroke-width="1.3"/></svg>
<svg style="position:absolute;left:85.8px;top:338px" width="22" height="22" viewBox="0 0 22 22" overflow="visible"><path d="M8 12 V4.5 C8 2.8 9 2 10.5 2 H17.5 C19 2 20 3 20 4.5 C20 5.8 19 6.5 17.8 6.5 H15.8 V13.8 C15.8 15.2 14.8 15.8 13.5 15.8 H12" fill="#E4E4E4" stroke="#333" stroke-width="1.3"/><circle cx="6.3" cy="14.6" r="6" fill="#1B7AD6"/><path d="M0.8 14.6 H11.8 M6.3 9 V20.2 M2 11.8 H10.6 M2 17.4 H10.6" stroke="#E6F0FA" stroke-width="0.8"/><ellipse cx="6.3" cy="14.6" rx="2.5" ry="5.6" fill="none" stroke="#E6F0FA" stroke-width="0.8"/></svg>
<div class="t" style="left:109.8px;top:338px;font-size:16px;color:#1E1E1E;">Catalog.API.http</div>
<svg style="position:absolute;left:72.8px;top:367.5px" width="9" height="11" viewBox="0 0 9 11"><path d="M2.2 4.5 V3.2 C2.2 1.6 3.1 0.8 4.5 0.8 C5.9 0.8 6.8 1.6 6.8 3.2 V4.5" fill="none" stroke="#1F7BD0" stroke-width="1.3"/><rect x="0.8" y="4.6" width="7.4" height="5.6" rx="0.7" fill="#DCE8F4" stroke="#1F7BD0" stroke-width="1.3"/></svg>
<svg style="position:absolute;left:85.8px;top:362px" width="22" height="22" viewBox="0 0 22 22" overflow="visible"><path d="M2.4 2.9 H12.8 L16.6 6.7 V19.2 H2.4 Z" fill="#E4E4E4" stroke="#777" stroke-width="1.4" stroke-linejoin="round"/><path d="M12.5 3 V7 H16.5" fill="#999" stroke="#999" stroke-width="0.8"/><path d="M7.6 8.5 C6.4 8.5 6.6 9.5 6.6 11 C6.6 12 6 12.3 5.6 12.3 C6 12.3 6.6 12.6 6.6 13.6 C6.6 15 6.4 16 7.6 16 M11.4 8.5 C12.6 8.5 12.4 9.5 12.4 11 C12.4 12 13 12.3 13.4 12.3 C13 12.3 12.4 12.6 12.4 13.6 C12.4 15 12.6 16 11.4 16" fill="none" stroke="#333" stroke-width="1.1"/></svg>
<div class="t" style="left:109.8px;top:362px;font-size:16px;color:#1E1E1E;">Catalog.API.json</div>
<svg style="position:absolute;left:72.8px;top:391.5px" width="9" height="11" viewBox="0 0 9 11"><path d="M2.2 4.5 V3.2 C2.2 1.6 3.1 0.8 4.5 0.8 C5.9 0.8 6.8 1.6 6.8 3.2 V4.5" fill="none" stroke="#1F7BD0" stroke-width="1.3"/><rect x="0.8" y="4.6" width="7.4" height="5.6" rx="0.7" fill="#DCE8F4" stroke="#1F7BD0" stroke-width="1.3"/></svg>
<svg style="position:absolute;left:85.8px;top:386px" width="22" height="22" viewBox="0 0 22 22" overflow="visible"><path d="M2.4 2.9 H12.8 L16.6 6.7 V19.2 H2.4 Z" fill="#E4E4E4" stroke="#777" stroke-width="1.4" stroke-linejoin="round"/><path d="M12.5 3 V7 H16.5" fill="#999" stroke="#999" stroke-width="0.8"/><path d="M7.6 8.5 C6.4 8.5 6.6 9.5 6.6 11 C6.6 12 6 12.3 5.6 12.3 C6 12.3 6.6 12.6 6.6 13.6 C6.6 15 6.4 16 7.6 16 M11.4 8.5 C12.6 8.5 12.4 9.5 12.4 11 C12.4 12 13 12.3 13.4 12.3 C13 12.3 12.4 12.6 12.4 13.6 C12.4 15 12.6 16 11.4 16" fill="none" stroke="#333" stroke-width="1.1"/></svg>
<div class="t" style="left:109.8px;top:386px;font-size:16px;color:#1E1E1E;">Catalog.API_v2.json</div>
<svg style="position:absolute;left:57.8px;top:413.5px" width="8" height="13" viewBox="0 0 8 13"><path d="M1 1.2 L6.6 6.5 L1 11.8 Z" fill="none" stroke="#1E1E1E" stroke-width="1.3"/></svg>
<svg style="position:absolute;left:72.8px;top:415.5px" width="9" height="11" viewBox="0 0 9 11"><path d="M2.2 4.5 V3.2 C2.2 1.6 3.1 0.8 4.5 0.8 C5.9 0.8 6.8 1.6 6.8 3.2 V4.5" fill="none" stroke="#1F7BD0" stroke-width="1.3"/><rect x="0.8" y="4.6" width="7.4" height="5.6" rx="0.7" fill="#DCE8F4" stroke="#1F7BD0" stroke-width="1.3"/></svg>
<svg style="position:absolute;left:85.8px;top:410px" width="22" height="22" viewBox="0 0 22 22" overflow="visible"><path d="M8 8.2 A4 4.1 0 1 0 8 13.8" fill="none" stroke="#2E9E3E" stroke-width="1.9"/><g stroke="#2E9E3E" stroke-width="1.5"><path d="M10.5 8.5 H18.8 M10.5 11.6 H18.8 M13 6 V13.8 M16.3 6 V13.8"/></g></svg>
<div class="t" style="left:109.8px;top:410px;font-size:16px;color:#1E1E1E;">CatalogOptions.cs</div>
<svg style="position:absolute;left:72.8px;top:439.5px" width="9" height="11" viewBox="0 0 9 11"><path d="M2.2 4.5 V3.2 C2.2 1.6 3.1 0.8 4.5 0.8 C5.9 0.8 6.8 1.6 6.8 3.2 V4.5" fill="none" stroke="#1F7BD0" stroke-width="1.3"/><rect x="0.8" y="4.6" width="7.4" height="5.6" rx="0.7" fill="#DCE8F4" stroke="#1F7BD0" stroke-width="1.3"/></svg>
<svg style="position:absolute;left:85.8px;top:434px" width="22" height="22" viewBox="0 0 22 22" overflow="visible"><path d="M8 8.2 A4 4.1 0 1 0 8 13.8" fill="none" stroke="#2E9E3E" stroke-width="1.9"/><g stroke="#2E9E3E" stroke-width="1.5"><path d="M10.5 8.5 H18.8 M10.5 11.6 H18.8 M13 6 V13.8 M16.3 6 V13.8"/></g></svg>
<div class="t" style="left:109.8px;top:434px;font-size:16px;color:#1E1E1E;">GlobalUsings.cs</div>
<svg style="position:absolute;left:57.8px;top:461.5px" width="8" height="13" viewBox="0 0 8 13"><path d="M1 1.2 L6.6 6.5 L1 11.8 Z" fill="none" stroke="#1E1E1E" stroke-width="1.3"/></svg>
<svg style="position:absolute;left:72.8px;top:463.5px" width="9" height="11" viewBox="0 0 9 11"><path d="M2.2 4.5 V3.2 C2.2 1.6 3.1 0.8 4.5 0.8 C5.9 0.8 6.8 1.6 6.8 3.2 V4.5" fill="none" stroke="#1F7BD0" stroke-width="1.3"/><rect x="0.8" y="4.6" width="7.4" height="5.6" rx="0.7" fill="#DCE8F4" stroke="#1F7BD0" stroke-width="1.3"/></svg>
<svg style="position:absolute;left:85.8px;top:458px" width="22" height="22" viewBox="0 0 22 22" overflow="visible"><path d="M8 8.2 A4 4.1 0 1 0 8 13.8" fill="none" stroke="#2E9E3E" stroke-width="1.9"/><g stroke="#2E9E3E" stroke-width="1.5"><path d="M10.5 8.5 H18.8 M10.5 11.6 H18.8 M13 6 V13.8 M16.3 6 V13.8"/></g></svg>
<div class="t" style="left:109.8px;top:458px;font-size:16px;color:#1E1E1E;">Program.cs</div>
<svg style="position:absolute;left:35.6px;top:485.5px" width="8" height="13" viewBox="0 0 8 13"><path d="M1 1.2 L6.6 6.5 L1 11.8 Z" fill="none" stroke="#1E1E1E" stroke-width="1.3"/></svg>
<svg style="position:absolute;left:50.6px;top:487.5px" width="9" height="11" viewBox="0 0 9 11"><path d="M2.2 4.5 V3.2 C2.2 1.6 3.1 0.8 4.5 0.8 C5.9 0.8 6.8 1.6 6.8 3.2 V4.5" fill="none" stroke="#1F7BD0" stroke-width="1.3"/><rect x="0.8" y="4.6" width="7.4" height="5.6" rx="0.7" fill="#DCE8F4" stroke="#1F7BD0" stroke-width="1.3"/></svg>
<svg style="position:absolute;left:63.6px;top:482px" width="22" height="22" viewBox="0 0 22 22" overflow="visible"><rect x="0.8" y="4.1" width="16.6" height="14" rx="1.2" fill="#E6E6E6" stroke="#777" stroke-width="1.4"/><path d="M7.2 8.6 A2.9 3 0 1 0 7.2 13.6" fill="none" stroke="#3DAA4A" stroke-width="1.5"/><g stroke="#2E9E3E" stroke-width="1.3"><path d="M8.3 9.8 H14.6 M8.3 12.3 H14.6 M10.2 8 V14 M12.7 8 V14"/></g></svg>
<div class="t" style="left:87.6px;top:482px;font-size:16px;color:#1E1E1E;">ClientApp</div>
<svg style="position:absolute;left:35.6px;top:509.5px" width="8" height="13" viewBox="0 0 8 13"><path d="M1 1.2 L6.6 6.5 L1 11.8 Z" fill="none" stroke="#1E1E1E" stroke-width="1.3"/></svg>
<svg style="position:absolute;left:50.6px;top:511.5px" width="9" height="11" viewBox="0 0 9 11"><path d="M2.2 4.5 V3.2 C2.2 1.6 3.1 0.8 4.5 0.8 C5.9 0.8 6.8 1.6 6.8 3.2 V4.5" fill="none" stroke="#1F7BD0" stroke-width="1.3"/><rect x="0.8" y="4.6" width="7.4" height="5.6" rx="0.7" fill="#DCE8F4" stroke="#1F7BD0" stroke-width="1.3"/></svg>
<svg style="position:absolute;left:63.6px;top:506px" width="22" height="22" viewBox="0 0 22 22" overflow="visible"><path d="M1.2 9 V3.2 C1.2 2.5 1.7 2 2.4 2 H16.4 C17.1 2 17.6 2.5 17.6 3.2 V16.6 C17.6 17.3 17.1 17.8 16.4 17.8 H12.5" fill="#E4E4E4" stroke="#777" stroke-width="1.4"/><path d="M1.2 4.8 H17.6" stroke="#333" stroke-width="2.2"/><path d="M0 20.4 L5.5 11.6 L11 20.4 Z" fill="#7B4FE0" stroke="#6A3FD6" stroke-width="1" stroke-linejoin="round"/></svg>
<div class="t" style="left:87.6px;top:506px;font-size:16px;color:#1E1E1E;font-weight:bold;">eShop.AppHost</div>
<svg style="position:absolute;left:35.6px;top:533.5px" width="8" height="13" viewBox="0 0 8 13"><path d="M1 1.2 L6.6 6.5 L1 11.8 Z" fill="none" stroke="#1E1E1E" stroke-width="1.3"/></svg>
<svg style="position:absolute;left:50.6px;top:535.5px" width="9" height="11" viewBox="0 0 9 11"><path d="M2.2 4.5 V3.2 C2.2 1.6 3.1 0.8 4.5 0.8 C5.9 0.8 6.8 1.6 6.8 3.2 V4.5" fill="none" stroke="#1F7BD0" stroke-width="1.3"/><rect x="0.8" y="4.6" width="7.4" height="5.6" rx="0.7" fill="#DCE8F4" stroke="#1F7BD0" stroke-width="1.3"/></svg>
<svg style="position:absolute;left:63.6px;top:530px" width="22" height="22" viewBox="0 0 22 22" overflow="visible"><rect x="0.8" y="4.1" width="16.6" height="14" rx="1.2" fill="#E6E6E6" stroke="#777" stroke-width="1.4"/><path d="M7.2 8.6 A2.9 3 0 1 0 7.2 13.6" fill="none" stroke="#3DAA4A" stroke-width="1.5"/><g stroke="#2E9E3E" stroke-width="1.3"><path d="M8.3 9.8 H14.6 M8.3 12.3 H14.6 M10.2 8 V14 M12.7 8 V14"/></g></svg>
<div class="t" style="left:87.6px;top:530px;font-size:16px;color:#1E1E1E;">eShop.ServiceDefaults</div>
<svg style="position:absolute;left:35.6px;top:557.5px" width="8" height="13" viewBox="0 0 8 13"><path d="M1 1.2 L6.6 6.5 L1 11.8 Z" fill="none" stroke="#1E1E1E" stroke-width="1.3"/></svg>
<svg style="position:absolute;left:50.6px;top:559.5px" width="9" height="11" viewBox="0 0 9 11"><path d="M2.2 4.5 V3.2 C2.2 1.6 3.1 0.8 4.5 0.8 C5.9 0.8 6.8 1.6 6.8 3.2 V4.5" fill="none" stroke="#1F7BD0" stroke-width="1.3"/><rect x="0.8" y="4.6" width="7.4" height="5.6" rx="0.7" fill="#DCE8F4" stroke="#1F7BD0" stroke-width="1.3"/></svg>
<svg style="position:absolute;left:63.6px;top:554px" width="22" height="22" viewBox="0 0 22 22" overflow="visible"><rect x="0.8" y="4.1" width="16.6" height="14" rx="1.2" fill="#E6E6E6" stroke="#777" stroke-width="1.4"/><path d="M7.2 8.6 A2.9 3 0 1 0 7.2 13.6" fill="none" stroke="#3DAA4A" stroke-width="1.5"/><g stroke="#2E9E3E" stroke-width="1.3"><path d="M8.3 9.8 H14.6 M8.3 12.3 H14.6 M10.2 8 V14 M12.7 8 V14"/></g></svg>
<div class="t" style="left:87.6px;top:554px;font-size:16px;color:#1E1E1E;">EventBus</div>
<svg style="position:absolute;left:35.6px;top:581.5px" width="8" height="13" viewBox="0 0 8 13"><path d="M1 1.2 L6.6 6.5 L1 11.8 Z" fill="none" stroke="#1E1E1E" stroke-width="1.3"/></svg>
<svg style="position:absolute;left:50.6px;top:583.5px" width="9" height="11" viewBox="0 0 9 11"><path d="M2.2 4.5 V3.2 C2.2 1.6 3.1 0.8 4.5 0.8 C5.9 0.8 6.8 1.6 6.8 3.2 V4.5" fill="none" stroke="#1F7BD0" stroke-width="1.3"/><rect x="0.8" y="4.6" width="7.4" height="5.6" rx="0.7" fill="#DCE8F4" stroke="#1F7BD0" stroke-width="1.3"/></svg>
<svg style="position:absolute;left:63.6px;top:578px" width="22" height="22" viewBox="0 0 22 22" overflow="visible"><rect x="0.8" y="4.1" width="16.6" height="14" rx="1.2" fill="#E6E6E6" stroke="#777" stroke-width="1.4"/><path d="M7.2 8.6 A2.9 3 0 1 0 7.2 13.6" fill="none" stroke="#3DAA4A" stroke-width="1.5"/><g stroke="#2E9E3E" stroke-width="1.3"><path d="M8.3 9.8 H14.6 M8.3 12.3 H14.6 M10.2 8 V14 M12.7 8 V14"/></g></svg>
<div class="t" style="left:87.6px;top:578px;font-size:16px;color:#1E1E1E;">EventBusRabbitMQ</div>
<svg style="position:absolute;left:35.6px;top:605.5px" width="8" height="13" viewBox="0 0 8 13"><path d="M1 1.2 L6.6 6.5 L1 11.8 Z" fill="none" stroke="#1E1E1E" stroke-width="1.3"/></svg>
<svg style="position:absolute;left:50.6px;top:607.5px" width="9" height="11" viewBox="0 0 9 11"><path d="M2.2 4.5 V3.2 C2.2 1.6 3.1 0.8 4.5 0.8 C5.9 0.8 6.8 1.6 6.8 3.2 V4.5" fill="none" stroke="#1F7BD0" stroke-width="1.3"/><rect x="0.8" y="4.6" width="7.4" height="5.6" rx="0.7" fill="#DCE8F4" stroke="#1F7BD0" stroke-width="1.3"/></svg>
<svg style="position:absolute;left:63.6px;top:602px" width="22" height="22" viewBox="0 0 22 22" overflow="visible"><path d="M3.5 9 V3.2 C3.5 2.5 4 2 4.7 2 H17.6 C18.3 2 18.8 2.5 18.8 3.2 V17.3 C18.8 18 18.3 18.5 17.6 18.5 H11.5" fill="#E4E4E4" stroke="#777" stroke-width="1.4"/><path d="M3.5 4.3 H18.8" stroke="#333" stroke-width="2.2"/><circle cx="5.3" cy="15.3" r="6.2" fill="#1B7AD6"/><path d="M-0.6 15.3 H11.2 M5.3 9.2 V21.4 M0.8 12.4 H9.8 M0.8 18.2 H9.8" stroke="#E6F0FA" stroke-width="0.8"/><ellipse cx="5.3" cy="15.3" rx="2.6" ry="5.9" fill="none" stroke="#E6F0FA" stroke-width="0.8"/></svg>
<div class="t" style="left:87.6px;top:602px;font-size:16px;color:#1E1E1E;">HybridApp</div>
<svg style="position:absolute;left:35.6px;top:629.5px" width="8" height="13" viewBox="0 0 8 13"><path d="M1 1.2 L6.6 6.5 L1 11.8 Z" fill="none" stroke="#1E1E1E" stroke-width="1.3"/></svg>
<svg style="position:absolute;left:50.6px;top:631.5px" width="9" height="11" viewBox="0 0 9 11"><path d="M2.2 4.5 V3.2 C2.2 1.6 3.1 0.8 4.5 0.8 C5.9 0.8 6.8 1.6 6.8 3.2 V4.5" fill="none" stroke="#1F7BD0" stroke-width="1.3"/><rect x="0.8" y="4.6" width="7.4" height="5.6" rx="0.7" fill="#DCE8F4" stroke="#1F7BD0" stroke-width="1.3"/></svg>
<svg style="position:absolute;left:63.6px;top:626px" width="22" height="22" viewBox="0 0 22 22" overflow="visible"><path d="M3.5 9 V3.2 C3.5 2.5 4 2 4.7 2 H17.6 C18.3 2 18.8 2.5 18.8 3.2 V17.3 C18.8 18 18.3 18.5 17.6 18.5 H11.5" fill="#E4E4E4" stroke="#777" stroke-width="1.4"/><path d="M3.5 4.3 H18.8" stroke="#333" stroke-width="2.2"/><circle cx="5.3" cy="15.3" r="6.2" fill="#1B7AD6"/><path d="M-0.6 15.3 H11.2 M5.3 9.2 V21.4 M0.8 12.4 H9.8 M0.8 18.2 H9.8" stroke="#E6F0FA" stroke-width="0.8"/><ellipse cx="5.3" cy="15.3" rx="2.6" ry="5.9" fill="none" stroke="#E6F0FA" stroke-width="0.8"/></svg>
<div class="t" style="left:87.6px;top:626px;font-size:16px;color:#1E1E1E;">Identity.API</div>
<svg style="position:absolute;left:35.6px;top:653.5px" width="8" height="13" viewBox="0 0 8 13"><path d="M1 1.2 L6.6 6.5 L1 11.8 Z" fill="none" stroke="#1E1E1E" stroke-width="1.3"/></svg>
<svg style="position:absolute;left:50.6px;top:655.5px" width="9" height="11" viewBox="0 0 9 11"><path d="M2.2 4.5 V3.2 C2.2 1.6 3.1 0.8 4.5 0.8 C5.9 0.8 6.8 1.6 6.8 3.2 V4.5" fill="none" stroke="#1F7BD0" stroke-width="1.3"/><rect x="0.8" y="4.6" width="7.4" height="5.6" rx="0.7" fill="#DCE8F4" stroke="#1F7BD0" stroke-width="1.3"/></svg>
<svg style="position:absolute;left:63.6px;top:650px" width="22" height="22" viewBox="0 0 22 22" overflow="visible"><rect x="0.8" y="4.1" width="16.6" height="14" rx="1.2" fill="#E6E6E6" stroke="#777" stroke-width="1.4"/><path d="M7.2 8.6 A2.9 3 0 1 0 7.2 13.6" fill="none" stroke="#3DAA4A" stroke-width="1.5"/><g stroke="#2E9E3E" stroke-width="1.3"><path d="M8.3 9.8 H14.6 M8.3 12.3 H14.6 M10.2 8 V14 M12.7 8 V14"/></g></svg>
<div class="t" style="left:87.6px;top:650px;font-size:16px;color:#1E1E1E;">IntegrationEventLogEF</div>
<svg style="position:absolute;left:35.6px;top:677.5px" width="8" height="13" viewBox="0 0 8 13"><path d="M1 1.2 L6.6 6.5 L1 11.8 Z" fill="none" stroke="#1E1E1E" stroke-width="1.3"/></svg>
<svg style="position:absolute;left:50.6px;top:679.5px" width="9" height="11" viewBox="0 0 9 11"><path d="M2.2 4.5 V3.2 C2.2 1.6 3.1 0.8 4.5 0.8 C5.9 0.8 6.8 1.6 6.8 3.2 V4.5" fill="none" stroke="#1F7BD0" stroke-width="1.3"/><rect x="0.8" y="4.6" width="7.4" height="5.6" rx="0.7" fill="#DCE8F4" stroke="#1F7BD0" stroke-width="1.3"/></svg>
<svg style="position:absolute;left:63.6px;top:674px" width="22" height="22" viewBox="0 0 22 22" overflow="visible"><path d="M3.5 9 V3.2 C3.5 2.5 4 2 4.7 2 H17.6 C18.3 2 18.8 2.5 18.8 3.2 V17.3 C18.8 18 18.3 18.5 17.6 18.5 H11.5" fill="#E4E4E4" stroke="#777" stroke-width="1.4"/><path d="M3.5 4.3 H18.8" stroke="#333" stroke-width="2.2"/><circle cx="5.3" cy="15.3" r="6.2" fill="#1B7AD6"/><path d="M-0.6 15.3 H11.2 M5.3 9.2 V21.4 M0.8 12.4 H9.8 M0.8 18.2 H9.8" stroke="#E6F0FA" stroke-width="0.8"/><ellipse cx="5.3" cy="15.3" rx="2.6" ry="5.9" fill="none" stroke="#E6F0FA" stroke-width="0.8"/></svg>
<div class="t" style="left:87.6px;top:674px;font-size:16px;color:#1E1E1E;">Ordering.API</div>
<svg style="position:absolute;left:35.6px;top:701.5px" width="8" height="13" viewBox="0 0 8 13"><path d="M1 1.2 L6.6 6.5 L1 11.8 Z" fill="none" stroke="#1E1E1E" stroke-width="1.3"/></svg>
<svg style="position:absolute;left:50.6px;top:703.5px" width="9" height="11" viewBox="0 0 9 11"><path d="M2.2 4.5 V3.2 C2.2 1.6 3.1 0.8 4.5 0.8 C5.9 0.8 6.8 1.6 6.8 3.2 V4.5" fill="none" stroke="#1F7BD0" stroke-width="1.3"/><rect x="0.8" y="4.6" width="7.4" height="5.6" rx="0.7" fill="#DCE8F4" stroke="#1F7BD0" stroke-width="1.3"/></svg>
<svg style="position:absolute;left:63.6px;top:698px" width="22" height="22" viewBox="0 0 22 22" overflow="visible"><rect x="0.8" y="4.1" width="16.6" height="14" rx="1.2" fill="#E6E6E6" stroke="#777" stroke-width="1.4"/><path d="M7.2 8.6 A2.9 3 0 1 0 7.2 13.6" fill="none" stroke="#3DAA4A" stroke-width="1.5"/><g stroke="#2E9E3E" stroke-width="1.3"><path d="M8.3 9.8 H14.6 M8.3 12.3 H14.6 M10.2 8 V14 M12.7 8 V14"/></g></svg>
<div class="t" style="left:87.6px;top:698px;font-size:16px;color:#1E1E1E;">Ordering.Domain</div>
<svg style="position:absolute;left:35.6px;top:725.5px" width="8" height="13" viewBox="0 0 8 13"><path d="M1 1.2 L6.6 6.5 L1 11.8 Z" fill="none" stroke="#1E1E1E" stroke-width="1.3"/></svg>
<svg style="position:absolute;left:50.6px;top:727.5px" width="9" height="11" viewBox="0 0 9 11"><path d="M2.2 4.5 V3.2 C2.2 1.6 3.1 0.8 4.5 0.8 C5.9 0.8 6.8 1.6 6.8 3.2 V4.5" fill="none" stroke="#1F7BD0" stroke-width="1.3"/><rect x="0.8" y="4.6" width="7.4" height="5.6" rx="0.7" fill="#DCE8F4" stroke="#1F7BD0" stroke-width="1.3"/></svg>
<svg style="position:absolute;left:63.6px;top:722px" width="22" height="22" viewBox="0 0 22 22" overflow="visible"><rect x="0.8" y="4.1" width="16.6" height="14" rx="1.2" fill="#E6E6E6" stroke="#777" stroke-width="1.4"/><path d="M7.2 8.6 A2.9 3 0 1 0 7.2 13.6" fill="none" stroke="#3DAA4A" stroke-width="1.5"/><g stroke="#2E9E3E" stroke-width="1.3"><path d="M8.3 9.8 H14.6 M8.3 12.3 H14.6 M10.2 8 V14 M12.7 8 V14"/></g></svg>
<div class="t" style="left:87.6px;top:722px;font-size:16px;color:#1E1E1E;">Ordering.Infrastructure</div>
</div>
<svg style="position:absolute;left:1862px;top:185px;" width="14" height="8" viewBox="0 0 14 8" overflow="visible"><path d="M0 7 L7 0 L14 7Z" fill="#86868B"/></svg>
<div style="position:absolute;left:1864px;top:335px;width:11px;height:387px;background:#C2C3C9;"></div>
<svg style="position:absolute;left:1862px;top:901px;" width="14" height="8" viewBox="0 0 14 8" overflow="visible"><path d="M0 0 L7 7 L14 0Z" fill="#86868B"/></svg>
<div style="position:absolute;left:1598px;top:917px;width:282px;height:18px;background:#F5F5F5;"></div>
<svg style="position:absolute;left:1604px;top:920px;" width="8" height="12" viewBox="0 0 8 12" overflow="visible"><path d="M7 0 L0 6 L7 12Z" fill="#86868B"/></svg>
<div style="position:absolute;left:1619px;top:920px;width:159px;height:11px;background:#C2C3C9;"></div>
<svg style="position:absolute;left:1845px;top:920px;" width="8" height="12" viewBox="0 0 8 12" overflow="visible"><path d="M0 0 L7 6 L0 12Z" fill="#86868B"/></svg>
<div style="position:absolute;left:1859px;top:917px;width:21px;height:18px;background:#EBEBEB;"></div>
<div style="position:absolute;left:1597px;top:936px;width:150px;height:25px;background:#F5F5F5;border-left:1px solid #CCCEDB;border-right:1px solid #CCCEDB;border-bottom:1px solid #CCCEDB"></div>
<div style="position:absolute;left:1747px;top:936px;width:134px;height:25px;background:#EEEEF2;border-top:1px solid #CCCEDB"></div>
<div class="t " style="left:1603px;top:937px;font-size:15px;color:#1B6FBF;">解决方案资源管理器</div>
<div class="t " style="left:1752px;top:937px;font-size:15px;color:#1E1E1E;">Git 更改</div>
<div class="t" style="left:1883px;top:92px;font-size:14px;color:#444;transform:rotate(90deg);transform-origin:14px 12px;line-height:24px">属性</div>
<div style="position:absolute;left:1912px;top:88px;width:8px;height:30px;background:#C9CBD3;"></div>
<div style="position:absolute;left:1907px;top:879px;width:9px;height:72px;border-radius:5px;background:linear-gradient(to bottom,#EDEDED 0,#E2E2E2 66%,#1ECDB8 66%,#1FA0F0 100%)"></div>
</body></html>
